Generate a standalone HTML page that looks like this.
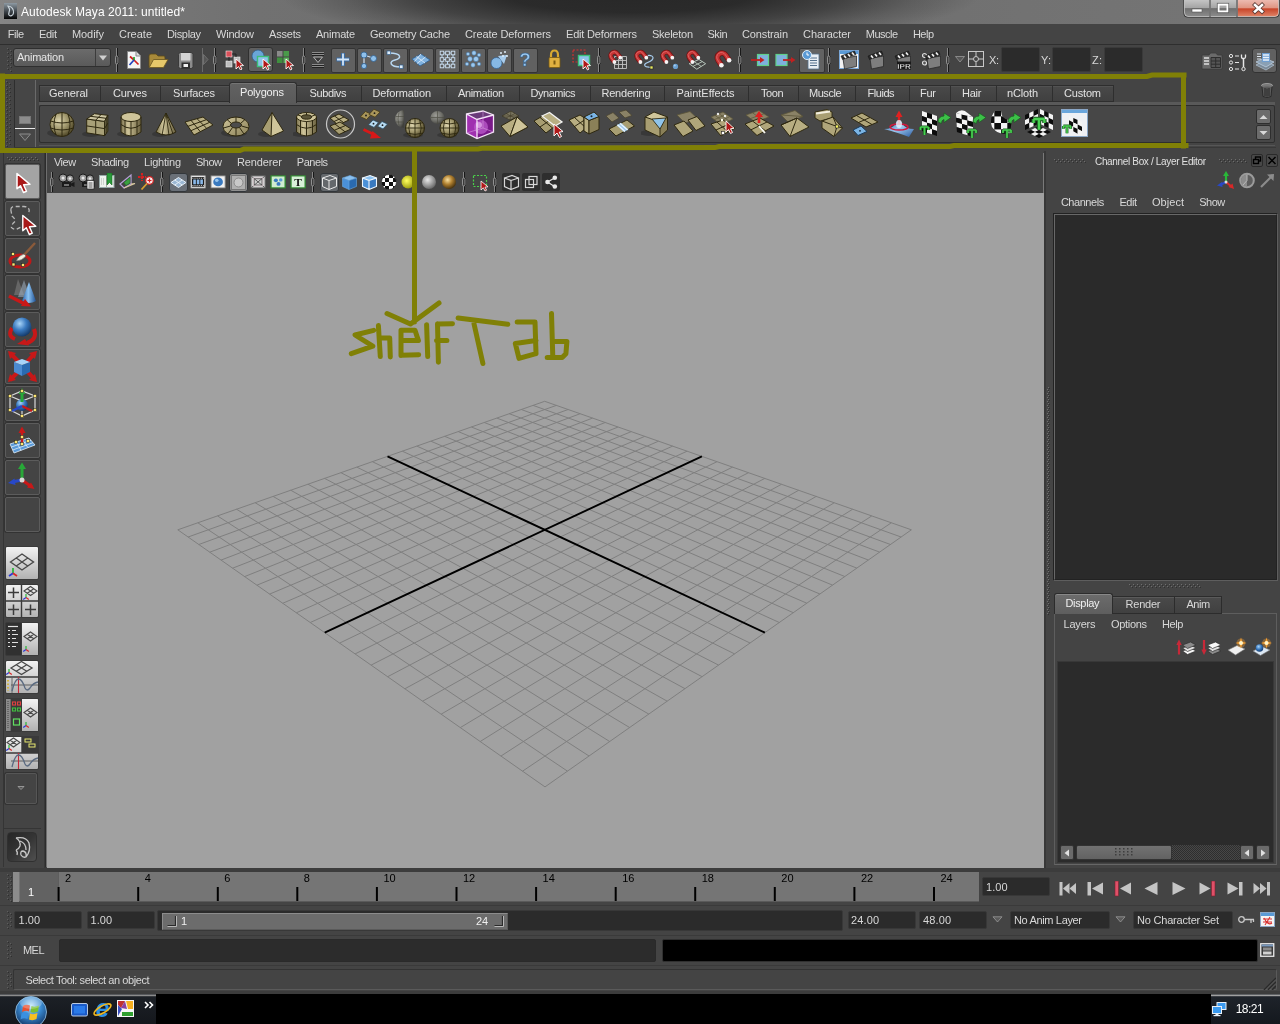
<!DOCTYPE html>
<html><head><meta charset="utf-8"><title>Autodesk Maya 2011: untitled*</title>
<style>
html,body{margin:0;padding:0;}
body{width:1280px;height:1024px;position:relative;overflow:hidden;background:#444444;font-family:"Liberation Sans",sans-serif;}
#root{position:absolute;left:0;top:0;width:1280px;height:1024px;overflow:hidden;background:transparent;will-change:transform;}
#root div,#root span,#root svg{position:absolute;box-sizing:border-box;}
.t{white-space:nowrap;}
</style></head><body><div id="root">
<div style="left:0px;top:0px;width:1280px;height:24px;background:linear-gradient(90deg,#858585 0%,#787878 8%,#717171 20%,#6c6c6c 50%,#727272 80%,#757575 100%);"></div>
<div style="left:0px;top:0px;width:1280px;height:24px;background:radial-gradient(ellipse 350px 50px at 630px -5px,rgba(40,40,40,1) 0%,rgba(40,40,40,.96) 35%,rgba(40,40,40,.62) 62%,rgba(40,40,40,.25) 82%,rgba(40,40,40,0) 100%);"></div>
<span class="t" style="left:21.0px;top:4.0px;font-size:12px;line-height:16px;color:#ffffff;letter-spacing:0.076px;">Autodesk Maya 2011: untitled*</span>
<svg style="left:4px;top:3px;" width="13" height="16" viewBox="0 0 13 16"><defs><linearGradient id="mi" x1="0" y1="0" x2="0" y2="1"><stop offset="0" stop-color="#8e9aa3"/><stop offset=".55" stop-color="#3c4248"/><stop offset="1" stop-color="#050505"/></linearGradient></defs><rect width="13" height="16" fill="url(#mi)"/><path d="M4 3C8 3 10 7 9.5 10C9 13 6 13.5 5 12C4 10 6 8 5.5 6C5 5 4.5 4 4 3Z" fill="none" stroke="#c9d3da" stroke-width="1.2"/></svg>
<svg style="left:1182px;top:0px;" width="98" height="19" viewBox="0 0 98 19"><defs>
<linearGradient id="wb" x1="0" y1="0" x2="0" y2="1"><stop offset="0" stop-color="#c4c4c4"/><stop offset=".48" stop-color="#a4a4a4"/><stop offset=".52" stop-color="#6f6f6f"/><stop offset="1" stop-color="#8c8c8c"/></linearGradient>
<linearGradient id="wc" x1="0" y1="0" x2="0" y2="1"><stop offset="0" stop-color="#ecbab0"/><stop offset=".46" stop-color="#e09684"/><stop offset=".54" stop-color="#c8452a"/><stop offset="1" stop-color="#e08468"/></linearGradient></defs>
<path d="M1.5 0V13Q1.5 17.5 6 17.5H93Q97.5 17.5 97.5 13V0Z" fill="#2a2a2a"/>
<path d="M2.5 0V13Q2.5 16.5 6 16.5H27.5V0Z" fill="url(#wb)"/>
<rect x="28.500" y="0" width="26" height="16.500" fill="url(#wb)"/>
<path d="M55.5 0V16.5H93Q96.500 16.5 96.500 13V0Z" fill="url(#wc)"/>
<path d="M2.5 0V13Q2.5 16.5 6 16.5H93Q96.5 16.5 96.5 13V0M27.500 0V16.5M28.5 0V16.5M54.5 0V16.5M55.5 0V16.5" fill="none" stroke="rgba(255,255,255,.55)" stroke-width="1"/>
<path d="M28 0V17M55 0V17" stroke="#3a3a3a" stroke-width="1"/>
<rect x="10" y="9" width="10" height="3" fill="#fff" stroke="#555" stroke-width=".6"/>
<rect x="36.500" y="4.500" width="9" height="7" fill="none" stroke="#fff" stroke-width="2"/><rect x="35.200" y="3.200" width="11.600" height="9.600" fill="none" stroke="#555" stroke-width=".6"/>
<path d="M73 5L80 11.500M80 5L73 11.500" stroke="#5a3a34" stroke-width="4.200" stroke-linecap="square"/><path d="M73 5L80 11.500M80 5L73 11.500" stroke="#fff" stroke-width="2.600" stroke-linecap="square"/>
</svg>
<div style="left:0px;top:24px;width:1280px;height:21px;background:#444444;"></div>
<span class="t" style="left:7.8px;top:27.0px;font-size:11px;line-height:15px;color:#d8d8d8;letter-spacing:-0.462px;">File</span>
<span class="t" style="left:39.0px;top:27.0px;font-size:11px;line-height:15px;color:#d8d8d8;letter-spacing:-0.318px;">Edit</span>
<span class="t" style="left:72.0px;top:27.0px;font-size:11px;line-height:15px;color:#d8d8d8;letter-spacing:-0.080px;">Modify</span>
<span class="t" style="left:119.0px;top:27.0px;font-size:11px;line-height:15px;color:#d8d8d8;letter-spacing:-0.003px;">Create</span>
<span class="t" style="left:167.0px;top:27.0px;font-size:11px;line-height:15px;color:#d8d8d8;letter-spacing:-0.344px;">Display</span>
<span class="t" style="left:216.0px;top:27.0px;font-size:11px;line-height:15px;color:#d8d8d8;letter-spacing:-0.224px;">Window</span>
<span class="t" style="left:269.0px;top:27.0px;font-size:11px;line-height:15px;color:#d8d8d8;letter-spacing:-0.202px;">Assets</span>
<span class="t" style="left:316.0px;top:27.0px;font-size:11px;line-height:15px;color:#d8d8d8;letter-spacing:-0.226px;">Animate</span>
<span class="t" style="left:370.0px;top:27.0px;font-size:11px;line-height:15px;color:#d8d8d8;letter-spacing:-0.242px;">Geometry Cache</span>
<span class="t" style="left:465.0px;top:27.0px;font-size:11px;line-height:15px;color:#d8d8d8;letter-spacing:-0.094px;">Create Deformers</span>
<span class="t" style="left:566.0px;top:27.0px;font-size:11px;line-height:15px;color:#d8d8d8;letter-spacing:-0.181px;">Edit Deformers</span>
<span class="t" style="left:652.0px;top:27.0px;font-size:11px;line-height:15px;color:#d8d8d8;letter-spacing:-0.258px;">Skeleton</span>
<span class="t" style="left:707.5px;top:27.0px;font-size:11px;line-height:15px;color:#d8d8d8;letter-spacing:-0.462px;">Skin</span>
<span class="t" style="left:742.0px;top:27.0px;font-size:11px;line-height:15px;color:#d8d8d8;letter-spacing:-0.135px;">Constrain</span>
<span class="t" style="left:803.0px;top:27.0px;font-size:11px;line-height:15px;color:#d8d8d8;letter-spacing:-0.037px;">Character</span>
<span class="t" style="left:865.7px;top:27.0px;font-size:11px;line-height:15px;color:#d8d8d8;letter-spacing:-0.462px;">Muscle</span>
<span class="t" style="left:912.9px;top:27.0px;font-size:11px;line-height:15px;color:#d8d8d8;letter-spacing:-0.462px;">Help</span>
<div style="left:0px;top:44px;width:1280px;height:1px;background:#2e2e2e;"></div>
<div style="left:0px;top:45px;width:1280px;height:29px;background:#444444;"></div>
<div style="left:0px;top:74px;width:1280px;height:77px;background:#444444;"></div>
<div style="left:46px;top:151px;width:998px;height:717px;background:#444444;"></div>
<div style="left:47px;top:193px;width:997px;height:675px;background:#a1a1a1;"></div>
<div style="left:0px;top:151px;width:46px;height:717px;background:#444444;"></div>
<div style="left:44px;top:151px;width:2px;height:717px;background:#383838;"></div>
<div style="left:1044px;top:151px;width:236px;height:717px;background:#444444;"></div>
<div style="left:0px;top:868px;width:1280px;height:37px;background:#444444;"></div>
<div style="left:0px;top:905px;width:1280px;height:30px;background:#444444;"></div>
<div style="left:0px;top:935px;width:1280px;height:30px;background:#444444;"></div>
<div style="left:0px;top:965px;width:1280px;height:29px;background:#444444;"></div>
<div style="left:0px;top:994px;width:1280px;height:30px;background:#000000;"></div>
<svg style="left:0px;top:0px;z-index:50;pointer-events:none" width="1280" height="1024" viewBox="0 0 1280 1024"><path d="M544.7 401.3L177.8 529.8M544.7 401.3L911.4 529.8M556.3 405.4L188.1 537.0M533.1 405.4L901.1 537.0M568.1 409.5L198.8 544.5M521.3 409.5L890.5 544.5M580.2 413.7L209.7 552.2M509.2 413.7L879.6 552.1M592.5 418.1L221.0 560.1M496.9 418.1L868.3 560.0M605.2 422.5L232.6 568.2M484.3 422.5L856.8 568.1M618.1 427.0L244.6 576.6M471.4 427.0L844.8 576.5M631.3 431.6L256.9 585.2M458.2 431.6L832.5 585.1M644.7 436.4L269.6 594.1M444.7 436.3L819.9 594.0M658.5 441.2L282.7 603.3M430.9 441.2L806.8 603.2M672.7 446.1L296.3 612.8M416.8 446.1L793.3 612.7M687.1 451.2L310.3 622.5M402.3 451.2L779.3 622.5M717.0 461.7L339.6 643.1M372.4 461.7L750.0 643.0M732.6 467.1L355.1 653.9M356.8 467.1L734.6 653.9M748.5 472.7L371.1 665.1M340.9 472.7L718.6 665.1M764.8 478.4L387.7 676.7M324.6 478.4L702.1 676.7M781.5 484.3L404.8 688.8M307.9 484.2L685.0 688.7M798.6 490.3L422.6 701.2M290.7 490.2L667.2 701.2M816.2 496.4L441.1 714.2M273.1 496.4L648.8 714.1M834.2 502.8L460.3 727.6M255.1 502.7L629.6 727.5M852.7 509.2L480.2 741.5M236.5 509.2L609.7 741.5M871.8 515.9L500.9 756.1M217.5 515.9L589.0 756.0M891.3 522.8L522.5 771.2M197.9 522.8L567.4 771.1M911.4 529.8L545.0 786.9M177.8 529.8L545.0 786.9" stroke="#7f7f7f" stroke-width="1" fill="none"/><path d="M701.9 456.4L324.7 632.7M387.5 456.4L764.9 632.6" stroke="#000" stroke-width="1.9" fill="none"/><path d="M2 76.5L1147 76.5L1152 75L1184 75M1183.5 75L1183.5 146M2.5 76L2.5 150M2 150.5L240 150.5L244 149L478 149L482 148.2L715 147.6L719 146.6L950 146.4L954 145.6L1186 145.6" stroke="#808006" stroke-width="5" fill="none" stroke-linecap="square" stroke-linejoin="miter"/><path d="M414.5 150L414.5 322M387 313.5L410.5 324L439 303M373.7 330.3L355 335L372.8 346.2L351.3 353.7M378.4 325.6L380.3 356.6M380.3 338L389.7 338L390.3 357M401 355.5L401 330.3L415 330.3L418.4 340.6L401 340.6M401 355.2L418.7 354.7M426.6 324.7L427.7 356.6M437.5 323.8L438.4 362.2M437.5 324.1L452.5 323.8M436.6 340.6L446.9 340.6M458.1 318.1L507.8 324.3M474 323.8L482.9 363.5M517.2 321.9L535 321.9L536 353.7M536 340.6L515.3 343.4L519 358.4L536 353.7M551.5 313.4L552.8 357.5M552.8 341.6L566.9 341.6L565.9 353.7L562.2 357.5L547.2 357.5" stroke="#808006" stroke-width="5" fill="none" stroke-linecap="round" stroke-linejoin="round"/></svg>
<svg style="left:7px;top:48px;" width="6" height="24" viewBox="0 0 6 24"><rect x="0" y="0" width="1" height="1" fill="#5e5e5e"/><rect x="1" y="1" width="1" height="1" fill="#2e2e2e"/><rect x="3" y="2" width="1" height="1" fill="#5e5e5e"/><rect x="4" y="3" width="1" height="1" fill="#2e2e2e"/><rect x="0" y="4" width="1" height="1" fill="#5e5e5e"/><rect x="1" y="5" width="1" height="1" fill="#2e2e2e"/><rect x="3" y="6" width="1" height="1" fill="#5e5e5e"/><rect x="4" y="7" width="1" height="1" fill="#2e2e2e"/><rect x="0" y="8" width="1" height="1" fill="#5e5e5e"/><rect x="1" y="9" width="1" height="1" fill="#2e2e2e"/><rect x="3" y="10" width="1" height="1" fill="#5e5e5e"/><rect x="4" y="11" width="1" height="1" fill="#2e2e2e"/><rect x="0" y="12" width="1" height="1" fill="#5e5e5e"/><rect x="1" y="13" width="1" height="1" fill="#2e2e2e"/><rect x="3" y="14" width="1" height="1" fill="#5e5e5e"/><rect x="4" y="15" width="1" height="1" fill="#2e2e2e"/><rect x="0" y="16" width="1" height="1" fill="#5e5e5e"/><rect x="1" y="17" width="1" height="1" fill="#2e2e2e"/><rect x="3" y="18" width="1" height="1" fill="#5e5e5e"/><rect x="4" y="19" width="1" height="1" fill="#2e2e2e"/><rect x="0" y="20" width="1" height="1" fill="#5e5e5e"/><rect x="1" y="21" width="1" height="1" fill="#2e2e2e"/><rect x="3" y="22" width="1" height="1" fill="#5e5e5e"/><rect x="4" y="23" width="1" height="1" fill="#2e2e2e"/></svg>
<div style="left:13px;top:48px;width:98px;height:19px;background:linear-gradient(180deg,#6b6b6b,#5a5a5a);border:1px solid #2f2f2f;border-radius:3px;"></div>
<div style="left:95px;top:49px;width:1px;height:17px;background:#3c3c3c;"></div>
<svg style="left:98px;top:55px;" width="10" height="6" viewBox="0 0 10 6"><path d="M1 .5H9L5 5.500Z" fill="#d0d0d0"/></svg>
<span class="t" style="left:17.0px;top:50.0px;font-size:11px;line-height:15px;color:#e6e6e6;letter-spacing:-0.239px;">Animation</span>
<svg style="left:114px;top:48px;" width="6" height="24" viewBox="0 0 6 24"><path d="M2.500 0V24" stroke="#868686" stroke-width="1"/><path d="M3.500 0V24" stroke="#181818" stroke-width="1"/><rect x="4" y="8.0" width="1" height="8" fill="#181818"/><rect x="1.500" y="8.0" width="2.500" height="8" rx="1.200" fill="#3a3a3a" stroke="#9a9a9a" stroke-width=".9"/></svg>
<svg style="left:126px;top:51px;" width="16" height="18" viewBox="0 0 16 18"><path d="M1.500 .5H10L14.500 5V17.500H1.500Z" fill="#f4f4f4" stroke="#8a8a8a"/><path d="M10 .5V5H14.500" fill="#ddd" stroke="#8a8a8a"/><path d="M8 9L4 5.500M8 9L12.500 13.500" stroke="#d02020" stroke-width="1.700" fill="none"/><path d="M8 9L3.500 14" stroke="#2040c0" stroke-width="1.700" fill="none"/><path d="M8 9V6" stroke="#20a030" stroke-width="1.700"/></svg>
<svg style="left:148px;top:52px;" width="21" height="17" viewBox="0 0 21 17"><path d="M1 4Q1 2 3 2H8L10 4H16Q17 4 17 6V8H6L2 15H1Z" fill="#a88a3a" stroke="#5c4a1a" stroke-width=".8"/><path d="M5.500 7.500H20L15.500 15.500H1.200Z" fill="#e6c86a" stroke="#6a5520" stroke-width=".8"/></svg>
<svg style="left:178px;top:52px;" width="16" height="17" viewBox="0 0 16 17"><rect x=".5" y=".5" width="14.500" height="16" rx="2" fill="#8c8c8c" stroke="#3a3a3a"/><rect x="3" y="1" width="9.500" height="7.500" fill="#d4d4d4"/><rect x="3.500" y="10.500" width="8.500" height="6" fill="#2e2e2e"/><rect x="5.500" y="12" width="4.500" height="3" fill="#f0f0f0"/></svg>
<div style="left:201.5px;top:48px;width:1px;height:24px;background:#6a6a6a;"></div>
<svg style="left:203px;top:54px;" width="6" height="11" viewBox="0 0 6 11"><path d="M.5 .5L5 5.500L.5 10.500Z" fill="#555" stroke="#7a7a7a" stroke-width=".8"/></svg>
<svg style="left:212px;top:48px;" width="6" height="24" viewBox="0 0 6 24"><path d="M2.500 0V24" stroke="#868686" stroke-width="1"/><path d="M3.500 0V24" stroke="#181818" stroke-width="1"/><rect x="4" y="8.0" width="1" height="8" fill="#181818"/><rect x="1.500" y="8.0" width="2.500" height="8" rx="1.200" fill="#3a3a3a" stroke="#9a9a9a" stroke-width=".9"/></svg>
<svg style="left:224px;top:50px;" width="21" height="20" viewBox="0 0 21 20"><rect x="2" y="1" width="6" height="6" fill="#d9505a" stroke="#eee" stroke-width=".6"/><rect x="2" y="11" width="6" height="6" fill="#bdbdbd" stroke="#eee" stroke-width=".6"/><rect x="10" y="7" width="6" height="6" fill="#bdbdbd" stroke="#eee" stroke-width=".6"/><path d="M5 7V11M8 4H12V7" stroke="#222" stroke-width="1" fill="none"/><path d="M12 9L12 19L14.500 16.500L16.500 20L18 19L16.200 15.800L19.500 15.500Z" fill="#b01818" stroke="#fff" stroke-width=".9"/></svg>
<div style="left:248px;top:47px;width:25px;height:25px;background:#606060;border:1px solid #303030;border-radius:3px;"></div>
<svg style="left:251px;top:49px;" width="20" height="22" viewBox="0 0 20 22"><circle cx="7" cy="7" r="6" fill="#6aa6d8" stroke="#2a5a8a" stroke-width=".7"/><rect x="6.500" y="7.500" width="11" height="10" fill="#8fc4ea" stroke="#3cc07a" stroke-width="1.400"/><path d="M12 10L12 20L14.500 17.500L16.500 21L18 20L16.200 16.800L19.500 16.500Z" fill="#b01818" stroke="#fff" stroke-width=".9"/></svg>
<svg style="left:277px;top:51px;" width="20" height="21" viewBox="0 0 20 21"><rect x="0" y="0" width="5.500" height="5.500" fill="#8a8a8a"/><rect x="6.500" y="0" width="5.500" height="5.500" fill="#4a9a4a"/><rect x="0" y="6.500" width="5.500" height="5.500" fill="#3f8f3f"/><rect x="6.500" y="6.500" width="5.500" height="5.500" fill="#58b058"/><path d="M9 8L9 18L11.500 15.500L13.500 19L15 18L13.200 14.800L16.500 14.500Z" fill="#b01818" stroke="#fff" stroke-width=".9"/></svg>
<svg style="left:301px;top:48px;" width="6" height="24" viewBox="0 0 6 24"><path d="M2.500 0V24" stroke="#868686" stroke-width="1"/><path d="M3.500 0V24" stroke="#181818" stroke-width="1"/><rect x="4" y="8.0" width="1" height="8" fill="#181818"/><rect x="1.500" y="8.0" width="2.500" height="8" rx="1.200" fill="#3a3a3a" stroke="#9a9a9a" stroke-width=".9"/></svg>
<svg style="left:312px;top:51px;" width="12" height="17" viewBox="0 0 12 17"><path d="M0 1.500H12M0 3.500H12M0 13.500H12M0 15.500H12" stroke="#8c8c8c" stroke-width="1"/><path d="M0 2.500H12M0 4.500H12M0 14.500H12M0 16.500H12" stroke="#222" stroke-width="1"/><path d="M1.500 6H10.500L6 11.500Z" fill="#383838" stroke="#b4b4b4" stroke-width="1"/></svg>
<div style="left:330.5px;top:47.5px;width:25px;height:25px;background:#616161;border:1px solid #343434;border-radius:2px;"></div>
<div style="left:356.5px;top:47.5px;width:25px;height:25px;background:#616161;border:1px solid #343434;border-radius:2px;"></div>
<div style="left:382.5px;top:47.5px;width:25px;height:25px;background:#616161;border:1px solid #343434;border-radius:2px;"></div>
<div style="left:408.5px;top:47.5px;width:25px;height:25px;background:#616161;border:1px solid #343434;border-radius:2px;"></div>
<div style="left:434.5px;top:47.5px;width:25px;height:25px;background:#616161;border:1px solid #343434;border-radius:2px;"></div>
<div style="left:460.5px;top:47.5px;width:25px;height:25px;background:#616161;border:1px solid #343434;border-radius:2px;"></div>
<div style="left:486.5px;top:47.5px;width:25px;height:25px;background:#616161;border:1px solid #343434;border-radius:2px;"></div>
<div style="left:512.5px;top:47.5px;width:25px;height:25px;background:#616161;border:1px solid #343434;border-radius:2px;"></div>
<svg style="left:331px;top:47px;" width="24" height="25" viewBox="0 0 24 25"><path d="M12 6V19M5.500 12.500H18.500" stroke="#3a6ea8" stroke-width="3.800" stroke-linecap="butt"/><path d="M12 6.500V18.500M6 12.500H18" stroke="#d4e6f8" stroke-width="1.800" stroke-linecap="butt"/></svg>
<svg style="left:357px;top:47px;" width="24" height="25" viewBox="0 0 24 25"><path d="M7 8L16 11M7 8V19" stroke="#cfe2f4" stroke-width="1.200"/><circle cx="7" cy="8" r="3" fill="#8fc0ea" stroke="#2f5f90" stroke-width=".8"/><circle cx="16.500" cy="11.500" r="3" fill="#8fc0ea" stroke="#2f5f90" stroke-width=".8"/><circle cx="7" cy="19" r="2.600" fill="#8fc0ea" stroke="#2f5f90" stroke-width=".8"/></svg>
<svg style="left:383px;top:47px;" width="24" height="25" viewBox="0 0 24 25"><path d="M6 6C20 6 18 12 12 13C6 14 6 20 18 20" stroke="#b9d8f2" stroke-width="1.500" fill="none"/><rect x="4" y="4" width="3.500" height="3.500" fill="#dfeefa" stroke="#2f5f90" stroke-width=".7"/><rect x="16.500" y="18" width="3.500" height="3.500" fill="#dfeefa" stroke="#2f5f90" stroke-width=".7"/></svg>
<svg style="left:409px;top:47px;" width="24" height="25" viewBox="0 0 24 25"><path d="M3 12L12 7L21 13L11 19Z" fill="#7fb2e0" stroke="#2f5f90" stroke-width=".8"/><path d="M7.500 9.500L16 16M12 7L5.500 14.500M16.500 10L8 16.500" stroke="#d8e9f8" stroke-width=".9"/></svg>
<svg style="left:435px;top:47px;" width="24" height="25" viewBox="0 0 24 25"><path d="M7 6H18V19H7ZM12.500 6V19M7 12.500H18" stroke="#b9d8f2" stroke-width="1" fill="none"/><rect x="5.2" y="4.2" width="3.600" height="3.600" fill="#5d5d5d" stroke="#cfe2f4" stroke-width=".9"/><rect x="5.2" y="10.7" width="3.600" height="3.600" fill="#5d5d5d" stroke="#cfe2f4" stroke-width=".9"/><rect x="5.2" y="17.2" width="3.600" height="3.600" fill="#5d5d5d" stroke="#cfe2f4" stroke-width=".9"/><rect x="10.7" y="4.2" width="3.600" height="3.600" fill="#5d5d5d" stroke="#cfe2f4" stroke-width=".9"/><rect x="10.7" y="10.7" width="3.600" height="3.600" fill="#5d5d5d" stroke="#cfe2f4" stroke-width=".9"/><rect x="10.7" y="17.2" width="3.600" height="3.600" fill="#5d5d5d" stroke="#cfe2f4" stroke-width=".9"/><rect x="16.2" y="4.2" width="3.600" height="3.600" fill="#5d5d5d" stroke="#cfe2f4" stroke-width=".9"/><rect x="16.2" y="10.7" width="3.600" height="3.600" fill="#5d5d5d" stroke="#cfe2f4" stroke-width=".9"/><rect x="16.2" y="17.2" width="3.600" height="3.600" fill="#5d5d5d" stroke="#cfe2f4" stroke-width=".9"/></svg>
<svg style="left:461px;top:47px;" width="24" height="25" viewBox="0 0 24 25"><circle cx="7" cy="7" r="1.8" fill="#9cc8ee" stroke="#3f70a0" stroke-width=".5"/><circle cx="13" cy="6" r="2.2" fill="#9cc8ee" stroke="#3f70a0" stroke-width=".5"/><circle cx="18" cy="8" r="1.8" fill="#9cc8ee" stroke="#3f70a0" stroke-width=".5"/><circle cx="9" cy="12" r="2.4" fill="#9cc8ee" stroke="#3f70a0" stroke-width=".5"/><circle cx="15" cy="12" r="2.6" fill="#9cc8ee" stroke="#3f70a0" stroke-width=".5"/><circle cx="6" cy="17" r="1.8" fill="#9cc8ee" stroke="#3f70a0" stroke-width=".5"/><circle cx="12" cy="18" r="2.2" fill="#9cc8ee" stroke="#3f70a0" stroke-width=".5"/><circle cx="18" cy="17" r="1.8" fill="#9cc8ee" stroke="#3f70a0" stroke-width=".5"/></svg>
<svg style="left:487px;top:47px;" width="24" height="25" viewBox="0 0 24 25"><circle cx="9.500" cy="16" r="5.500" fill="#86b8e4" stroke="#2f5f90" stroke-width=".7"/><path d="M11 9L17 17L20 8Z" fill="#a8cdee"/><circle cx="14" cy="6" r="1" fill="#dfeefa"/><circle cx="18" cy="5" r="1" fill="#dfeefa"/><circle cx="20" cy="9" r="1" fill="#dfeefa"/><circle cx="16" cy="9" r="1" fill="#dfeefa"/></svg>
<svg style="left:513px;top:47px;" width="24" height="25" viewBox="0 0 24 25"><text x="12" y="19" font-family="Liberation Sans" font-weight="bold" font-size="19" text-anchor="middle" fill="#9cc8ee" stroke="#2f5f90" stroke-width=".6">?</text></svg>
<svg style="left:548px;top:49px;" width="13" height="20" viewBox="0 0 13 20"><path d="M3 9V6Q3 1.500 6.500 1.500Q10 1.500 10 6V9" fill="none" stroke="#d8a830" stroke-width="2.200"/><rect x="1" y="8.500" width="11" height="10" rx="1" fill="#e0b040" stroke="#7a5a10" stroke-width=".8"/><rect x="5.500" y="11.500" width="2" height="4" fill="#7a5a10"/></svg>
<svg style="left:572px;top:49px;" width="20" height="22" viewBox="0 0 20 22"><rect x="1" y="1" width="12" height="12" fill="none" stroke="#d03030" stroke-width="1.200" stroke-dasharray="2 1.500"/><rect x="6.500" y="6.500" width="11" height="10" fill="#8fc4ea" stroke="#3cc07a" stroke-width="1.400"/><path d="M11 10L11 20L13.500 17.500L15.500 21L17 20L15.200 16.800L18.500 16.500Z" fill="#b01818" stroke="#fff" stroke-width=".9"/></svg>
<svg style="left:596px;top:48px;" width="6" height="24" viewBox="0 0 6 24"><path d="M2.500 0V24" stroke="#868686" stroke-width="1"/><path d="M3.500 0V24" stroke="#181818" stroke-width="1"/><rect x="4" y="8.0" width="1" height="8" fill="#181818"/><rect x="1.500" y="8.0" width="2.500" height="8" rx="1.200" fill="#3a3a3a" stroke="#9a9a9a" stroke-width=".9"/></svg>
<svg style="left:606px;top:49px;" width="24" height="23" viewBox="0 0 24 23"><path d="M8.500 7.500H20.500V19.500H8.500ZM12.500 7.500V19.500M16.500 7.500V19.500M8.500 11.500H20.500M8.500 15.500H20.500" stroke="#c4c4c4" stroke-width=".9" fill="none"/><path d="M8.400 13L5.400 8.950A3.650 3.650 0 0 1 11.300 4.650L14.300 8.700" fill="none" stroke="#701414" stroke-width="4.8"/><path d="M8.400 13L5.400 8.950A3.650 3.650 0 0 1 11.300 4.650L14.300 8.700" fill="none" stroke="#c83434" stroke-width="3.2"/><path d="M8.400 13L5.400 8.950A3.650 3.650 0 0 1 11.300 4.650L14.300 8.700" fill="none" stroke="#e88080" stroke-width="1" transform="translate(-.6,-.6)" opacity=".6"/><circle cx="8.4" cy="13" r="1.9000000000000001" fill="#f4f4f4"/><circle cx="14.3" cy="8.7" r="1.9000000000000001" fill="#f4f4f4"/></svg>
<svg style="left:632px;top:49px;" width="24" height="23" viewBox="0 0 24 23"><path d="M14 7C19 5 23 8 20 11C17 14 11 14 13 17C14 18.500 17 18 19 18.500" stroke="#a8cdee" stroke-width="1.200" fill="none"/><rect x="18" y="17" width="3" height="3" fill="#e8e860" stroke="#222" stroke-width=".6"/><path d="M8.400 13L5.400 8.950A3.650 3.650 0 0 1 11.300 4.650L14.300 8.700" fill="none" stroke="#701414" stroke-width="4.8"/><path d="M8.400 13L5.400 8.950A3.650 3.650 0 0 1 11.300 4.650L14.300 8.700" fill="none" stroke="#c83434" stroke-width="3.2"/><path d="M8.400 13L5.400 8.950A3.650 3.650 0 0 1 11.300 4.650L14.300 8.700" fill="none" stroke="#e88080" stroke-width="1" transform="translate(-.6,-.6)" opacity=".6"/><circle cx="8.4" cy="13" r="1.9000000000000001" fill="#f4f4f4"/><circle cx="14.3" cy="8.7" r="1.9000000000000001" fill="#f4f4f4"/></svg>
<svg style="left:658px;top:49px;" width="24" height="23" viewBox="0 0 24 23"><circle cx="17.500" cy="17.400" r="2.600" fill="#6a9fd0"/><circle cx="16.800" cy="16.600" r="1" fill="#a8cdee"/><path d="M8.400 13L5.400 8.950A3.650 3.650 0 0 1 11.300 4.650L14.300 8.700" fill="none" stroke="#701414" stroke-width="4.8"/><path d="M8.400 13L5.400 8.950A3.650 3.650 0 0 1 11.300 4.650L14.300 8.700" fill="none" stroke="#c83434" stroke-width="3.2"/><path d="M8.400 13L5.400 8.950A3.650 3.650 0 0 1 11.300 4.650L14.300 8.700" fill="none" stroke="#e88080" stroke-width="1" transform="translate(-.6,-.6)" opacity=".6"/><circle cx="8.4" cy="13" r="1.9000000000000001" fill="#f4f4f4"/><circle cx="14.3" cy="8.7" r="1.9000000000000001" fill="#f4f4f4"/></svg>
<svg style="left:684px;top:49px;" width="24" height="23" viewBox="0 0 24 23"><path d="M5.200 14.700L15 10.500L21.600 14.700L12.800 20.200Z" fill="none" stroke="#c4d4c8" stroke-width=".9"/><path d="M10 12.600L17.200 17.400M18.300 12.600L9 17.400" stroke="#c4d4c8" stroke-width=".8"/><path d="M8.400 13L5.400 8.950A3.650 3.650 0 0 1 11.300 4.650L14.300 8.700" fill="none" stroke="#701414" stroke-width="4.8"/><path d="M8.400 13L5.400 8.950A3.650 3.650 0 0 1 11.300 4.650L14.300 8.700" fill="none" stroke="#c83434" stroke-width="3.2"/><path d="M8.400 13L5.400 8.950A3.650 3.650 0 0 1 11.300 4.650L14.300 8.700" fill="none" stroke="#e88080" stroke-width="1" transform="translate(-.6,-.6)" opacity=".6"/><circle cx="8.4" cy="13" r="1.9000000000000001" fill="#f4f4f4"/><circle cx="14.3" cy="8.7" r="1.9000000000000001" fill="#f4f4f4"/></svg>
<svg style="left:710px;top:49px;" width="24" height="23" viewBox="0 0 24 23"><path d="M11.400 16.300L8.100 11.300A4.600 4.600 0 0 1 15.800 6.200L19.100 11.200" fill="none" stroke="#701414" stroke-width="5.6"/><path d="M11.400 16.300L8.100 11.300A4.600 4.600 0 0 1 15.800 6.200L19.100 11.200" fill="none" stroke="#c83434" stroke-width="4"/><path d="M11.400 16.300L8.100 11.300A4.600 4.600 0 0 1 15.800 6.200L19.100 11.200" fill="none" stroke="#e88080" stroke-width="1" transform="translate(-.6,-.6)" opacity=".6"/><circle cx="11.4" cy="16.3" r="2.3" fill="#f4f4f4"/><circle cx="19.1" cy="11.2" r="2.3" fill="#f4f4f4"/></svg>
<svg style="left:737px;top:48px;" width="6" height="24" viewBox="0 0 6 24"><path d="M2.500 0V24" stroke="#868686" stroke-width="1"/><path d="M3.500 0V24" stroke="#181818" stroke-width="1"/><rect x="4" y="8.0" width="1" height="8" fill="#181818"/><rect x="1.500" y="8.0" width="2.500" height="8" rx="1.200" fill="#3a3a3a" stroke="#9a9a9a" stroke-width=".9"/></svg>
<svg style="left:750px;top:51px;" width="22" height="18" viewBox="0 0 22 18"><rect x="7.500" y="3.500" width="11" height="11" fill="#7fb0dd" stroke="#5fd08a" stroke-width="1.200"/><path d="M1 9H11" stroke="#c02020" stroke-width="1.800"/><path d="M10 6L14.500 9L10 12Z" fill="#c02020"/></svg>
<svg style="left:774px;top:51px;" width="24" height="18" viewBox="0 0 24 18"><rect x="2" y="3.500" width="11" height="11" fill="#7fb0dd" stroke="#5fd08a" stroke-width="1.200"/><path d="M9 9H18" stroke="#c02020" stroke-width="1.800"/><path d="M17 6L21.500 9L17 12Z" fill="#c02020"/></svg>
<div style="left:798.5px;top:47.5px;width:26px;height:25px;background:#626262;border:1px solid #343434;border-radius:2px;"></div>
<svg style="left:799px;top:47px;" width="25" height="25" viewBox="0 0 25 25"><path d="M9 7H20V22H9Z" fill="#e8eef4" stroke="#54708c" stroke-width=".8"/><path d="M11 11H18M11 13.500H18M11 16H18M11 18.500H18" stroke="#54708c" stroke-width="1"/><circle cx="8" cy="8" r="4.500" fill="#5a9ad6" stroke="#dfeefa" stroke-width="1"/><path d="M8 5.500V8H10" stroke="#fff" stroke-width="1" fill="none"/></svg>
<svg style="left:826px;top:48px;" width="6" height="24" viewBox="0 0 6 24"><path d="M2.500 0V24" stroke="#868686" stroke-width="1"/><path d="M3.500 0V24" stroke="#181818" stroke-width="1"/><rect x="4" y="8.0" width="1" height="8" fill="#181818"/><rect x="1.500" y="8.0" width="2.500" height="8" rx="1.200" fill="#3a3a3a" stroke="#9a9a9a" stroke-width=".9"/></svg>
<svg style="left:839px;top:50px;" width="20" height="19" viewBox="0 0 20 19"><rect x=".5" y=".5" width="19" height="18" fill="#f2f2f2" stroke="#7aa6d6"/><rect x="1" y="1" width="18" height="3" fill="#5a9ad6"/></svg>
<svg style="left:838px;top:49px;" width="22" height="22" viewBox="0 0 22 22"><path d="M5 9.500L18.500 7V17.500L6.500 20Z" fill="#7e7e7e" stroke="#2a2a2a" stroke-width=".8"/><path d="M3 7L16.500 2L18 5.500L4.500 10.500Z" fill="#2a2a2a" stroke="#111" stroke-width=".5"/><path d="M6 6.500L8 9M10 5L12 7.500M14 3.500L16 6" stroke="#f0f0f0" stroke-width="1.700"/></svg>
<svg style="left:865px;top:49px;" width="22" height="22" viewBox="0 0 22 22"><path d="M5 9.500L18.500 7V17.500L6.500 20Z" fill="#7e7e7e" stroke="#2a2a2a" stroke-width=".8"/><path d="M3 7L16.500 2L18 5.500L4.500 10.500Z" fill="#2a2a2a" stroke="#111" stroke-width=".5"/><path d="M6 6.500L8 9M10 5L12 7.500M14 3.500L16 6" stroke="#f0f0f0" stroke-width="1.700"/></svg>
<svg style="left:892px;top:49px;" width="22" height="22" viewBox="0 0 22 22"><path d="M5 9.500L18.500 7V17.500L6.500 20Z" fill="#7e7e7e" stroke="#2a2a2a" stroke-width=".8"/><path d="M3 7L16.500 2L18 5.500L4.500 10.500Z" fill="#2a2a2a" stroke="#111" stroke-width=".5"/><path d="M6 6.500L8 9M10 5L12 7.500M14 3.500L16 6" stroke="#f0f0f0" stroke-width="1.700"/><rect x="5" y="12.500" width="14" height="8" fill="#1a1a1a"/><text x="12" y="19.500" font-family="Liberation Sans" font-weight="bold" font-size="8" text-anchor="middle" fill="#fff" stroke="#111" stroke-width=".3">IPR</text></svg>
<svg style="left:922px;top:49px;" width="22" height="22" viewBox="0 0 22 22"><circle cx="2.500" cy="6.500" r="2" fill="#555" stroke="#ddd" stroke-width="1.200"/><circle cx="2.500" cy="14" r="2" fill="#555" stroke="#ddd" stroke-width="1.200"/><path d="M5 9.500L18.500 7V17.500L6.500 20Z" fill="#7e7e7e" stroke="#2a2a2a" stroke-width=".8"/><path d="M3 7L16.500 2L18 5.500L4.500 10.500Z" fill="#2a2a2a" stroke="#111" stroke-width=".5"/><path d="M6 6.500L8 9M10 5L12 7.500M14 3.500L16 6" stroke="#f0f0f0" stroke-width="1.700"/></svg>
<svg style="left:945px;top:48px;" width="6" height="24" viewBox="0 0 6 24"><path d="M2.500 0V24" stroke="#868686" stroke-width="1"/><path d="M3.500 0V24" stroke="#181818" stroke-width="1"/><rect x="4" y="8.0" width="1" height="8" fill="#181818"/><rect x="1.500" y="8.0" width="2.500" height="8" rx="1.200" fill="#3a3a3a" stroke="#9a9a9a" stroke-width=".9"/></svg>
<svg style="left:955px;top:56px;" width="10" height="8" viewBox="0 0 10 8"><path d="M.5 .5H9.500L5 6Z" fill="#555" stroke="#999" stroke-width=".8"/></svg>
<svg style="left:967.5px;top:50.5px;" width="16" height="16" viewBox="0 0 16 16"><rect x=".5" y=".5" width="15" height="15" fill="none" stroke="#c8c8c8"/><path d="M8 0V16M0 8H16" stroke="#c8c8c8" stroke-width="1"/><circle cx="8" cy="8" r="2.500" fill="#444" stroke="#c8c8c8"/></svg>
<span class="t" style="left:989.0px;top:53.0px;font-size:11px;line-height:15px;color:#d8d8d8;letter-spacing:-0.395px;">X:</span>
<span class="t" style="left:1041.0px;top:53.0px;font-size:11px;line-height:15px;color:#d8d8d8;letter-spacing:0.213px;">Y:</span>
<span class="t" style="left:1092.0px;top:53.0px;font-size:11px;line-height:15px;color:#d8d8d8;letter-spacing:0.225px;">Z:</span>
<div style="left:1001px;top:47px;width:39px;height:25px;background:#2b2b2b;border:1px solid #3a3a3a;border-radius:2px;"></div>
<div style="left:1052px;top:47px;width:39px;height:25px;background:#2b2b2b;border:1px solid #3a3a3a;border-radius:2px;"></div>
<div style="left:1104px;top:47px;width:39px;height:25px;background:#2b2b2b;border:1px solid #3a3a3a;border-radius:2px;"></div>
<svg style="left:1201px;top:52px;" width="22" height="18" viewBox="0 0 22 18"><path d="M1 3H8L9.500 1H15L16.500 3H21V17H1Z" fill="#6a6a6a" stroke="#3a3a3a" stroke-width=".8"/><path d="M3 6H8M3 9H8M3 12H8" stroke="#e0e0e0" stroke-width="1.300"/><path d="M10 5.500H19.500V15.500H10ZM10 9H19.500M10 12.200H19.500M14.700 5.500V15.500" fill="#555" stroke="#2e2e2e" stroke-width="1"/></svg>
<svg style="left:1228px;top:52.5px;" width="22" height="19" viewBox="0 0 22 19"><circle cx="3" cy="3" r="1.600" fill="none" stroke="#e6e6e6"/><circle cx="3" cy="9.500" r="1.600" fill="none" stroke="#e6e6e6"/><circle cx="3" cy="16" r="1.600" fill="none" stroke="#e6e6e6"/><path d="M7 3H11M7 9.500H11M7 16H11" stroke="#e6e6e6" stroke-width="1.200"/><path d="M15.500 5V14" stroke="#e6e6e6" stroke-width="1.500"/><path d="M13.500 1.500V4Q13.500 5.500 15.500 5.500Q17.500 5.500 17.500 4V1.500" fill="none" stroke="#e6e6e6" stroke-width="1.300"/><circle cx="15.500" cy="16" r="1.700" fill="none" stroke="#e6e6e6"/></svg>
<div style="left:1252px;top:48px;width:25px;height:25px;background:#606060;border:1px solid #333;border-radius:3px;"></div>
<svg style="left:1254px;top:51px;" width="22" height="22" viewBox="0 0 22 22"><path d="M2 14L10 10L20 14L12 19Z" fill="#7a8a98" stroke="#b4c6d6" stroke-width=".7"/><path d="M2 11L10 7L20 11L12 16Z" fill="#8aa0b4" stroke="#c4d6e6" stroke-width=".7"/><rect x="8" y="2" width="8" height="9" fill="#6f9ed0"/><path d="M9 4H15M9 6.500H15M9 9H15" stroke="#eaf2fa" stroke-width="1.300"/><path d="M3 3H7M3 5.500H7M3 8H7" stroke="#dfe8f0" stroke-width="1"/></svg>
<svg style="left:6px;top:81px;" width="6" height="66" viewBox="0 0 6 66"><rect x="0" y="0" width="1" height="1" fill="#5e5e5e"/><rect x="1" y="1" width="1" height="1" fill="#2e2e2e"/><rect x="3" y="2" width="1" height="1" fill="#5e5e5e"/><rect x="4" y="3" width="1" height="1" fill="#2e2e2e"/><rect x="0" y="4" width="1" height="1" fill="#5e5e5e"/><rect x="1" y="5" width="1" height="1" fill="#2e2e2e"/><rect x="3" y="6" width="1" height="1" fill="#5e5e5e"/><rect x="4" y="7" width="1" height="1" fill="#2e2e2e"/><rect x="0" y="8" width="1" height="1" fill="#5e5e5e"/><rect x="1" y="9" width="1" height="1" fill="#2e2e2e"/><rect x="3" y="10" width="1" height="1" fill="#5e5e5e"/><rect x="4" y="11" width="1" height="1" fill="#2e2e2e"/><rect x="0" y="12" width="1" height="1" fill="#5e5e5e"/><rect x="1" y="13" width="1" height="1" fill="#2e2e2e"/><rect x="3" y="14" width="1" height="1" fill="#5e5e5e"/><rect x="4" y="15" width="1" height="1" fill="#2e2e2e"/><rect x="0" y="16" width="1" height="1" fill="#5e5e5e"/><rect x="1" y="17" width="1" height="1" fill="#2e2e2e"/><rect x="3" y="18" width="1" height="1" fill="#5e5e5e"/><rect x="4" y="19" width="1" height="1" fill="#2e2e2e"/><rect x="0" y="20" width="1" height="1" fill="#5e5e5e"/><rect x="1" y="21" width="1" height="1" fill="#2e2e2e"/><rect x="3" y="22" width="1" height="1" fill="#5e5e5e"/><rect x="4" y="23" width="1" height="1" fill="#2e2e2e"/><rect x="0" y="24" width="1" height="1" fill="#5e5e5e"/><rect x="1" y="25" width="1" height="1" fill="#2e2e2e"/><rect x="3" y="26" width="1" height="1" fill="#5e5e5e"/><rect x="4" y="27" width="1" height="1" fill="#2e2e2e"/><rect x="0" y="28" width="1" height="1" fill="#5e5e5e"/><rect x="1" y="29" width="1" height="1" fill="#2e2e2e"/><rect x="3" y="30" width="1" height="1" fill="#5e5e5e"/><rect x="4" y="31" width="1" height="1" fill="#2e2e2e"/><rect x="0" y="32" width="1" height="1" fill="#5e5e5e"/><rect x="1" y="33" width="1" height="1" fill="#2e2e2e"/><rect x="3" y="34" width="1" height="1" fill="#5e5e5e"/><rect x="4" y="35" width="1" height="1" fill="#2e2e2e"/><rect x="0" y="36" width="1" height="1" fill="#5e5e5e"/><rect x="1" y="37" width="1" height="1" fill="#2e2e2e"/><rect x="3" y="38" width="1" height="1" fill="#5e5e5e"/><rect x="4" y="39" width="1" height="1" fill="#2e2e2e"/><rect x="0" y="40" width="1" height="1" fill="#5e5e5e"/><rect x="1" y="41" width="1" height="1" fill="#2e2e2e"/><rect x="3" y="42" width="1" height="1" fill="#5e5e5e"/><rect x="4" y="43" width="1" height="1" fill="#2e2e2e"/><rect x="0" y="44" width="1" height="1" fill="#5e5e5e"/><rect x="1" y="45" width="1" height="1" fill="#2e2e2e"/><rect x="3" y="46" width="1" height="1" fill="#5e5e5e"/><rect x="4" y="47" width="1" height="1" fill="#2e2e2e"/><rect x="0" y="48" width="1" height="1" fill="#5e5e5e"/><rect x="1" y="49" width="1" height="1" fill="#2e2e2e"/><rect x="3" y="50" width="1" height="1" fill="#5e5e5e"/><rect x="4" y="51" width="1" height="1" fill="#2e2e2e"/><rect x="0" y="52" width="1" height="1" fill="#5e5e5e"/><rect x="1" y="53" width="1" height="1" fill="#2e2e2e"/><rect x="3" y="54" width="1" height="1" fill="#5e5e5e"/><rect x="4" y="55" width="1" height="1" fill="#2e2e2e"/><rect x="0" y="56" width="1" height="1" fill="#5e5e5e"/><rect x="1" y="57" width="1" height="1" fill="#2e2e2e"/><rect x="3" y="58" width="1" height="1" fill="#5e5e5e"/><rect x="4" y="59" width="1" height="1" fill="#2e2e2e"/><rect x="0" y="60" width="1" height="1" fill="#5e5e5e"/><rect x="1" y="61" width="1" height="1" fill="#2e2e2e"/><rect x="3" y="62" width="1" height="1" fill="#5e5e5e"/><rect x="4" y="63" width="1" height="1" fill="#2e2e2e"/><rect x="0" y="64" width="1" height="1" fill="#5e5e5e"/><rect x="1" y="65" width="1" height="1" fill="#2e2e2e"/><rect x="3" y="66" width="1" height="1" fill="#5e5e5e"/><rect x="4" y="67" width="1" height="1" fill="#2e2e2e"/></svg>
<div style="left:14px;top:80px;width:1px;height:68px;background:#2e2e2e;"></div>
<div style="left:35px;top:80px;width:1px;height:68px;background:#6a6a6a;"></div>
<div style="left:15px;top:80px;width:20px;height:68px;background:#464646;"></div>
<div style="left:19px;top:116px;width:12px;height:8px;background:#8c8c8c;border:1px solid #777;"></div>
<div style="left:15px;top:128px;width:20px;height:1px;background:#e8e8e8;"></div>
<svg style="left:18px;top:133px;" width="14" height="9" viewBox="0 0 14 9"><path d="M1.500 1H12.500L7 7.500Z" fill="#505050" stroke="#8c8c8c" stroke-width="1"/></svg>
<div style="left:39px;top:102px;width:1236px;height:3px;background:#595959;"></div>
<div style="left:39px;top:85px;width:62px;height:17px;background:linear-gradient(180deg,#494949,#404040);border:1px solid #2e2e2e;box-shadow:inset 0 1px 0 #525252;"></div>
<span class="t" style="left:49.0px;top:86.0px;font-size:11px;line-height:15px;color:#e2e2e2;letter-spacing:-0.022px;">General</span>
<div style="left:100px;top:85px;width:61px;height:17px;background:linear-gradient(180deg,#494949,#404040);border:1px solid #2e2e2e;box-shadow:inset 0 1px 0 #525252;"></div>
<span class="t" style="left:113.0px;top:86.0px;font-size:11px;line-height:15px;color:#e2e2e2;letter-spacing:-0.168px;">Curves</span>
<div style="left:160px;top:85px;width:70px;height:17px;background:linear-gradient(180deg,#494949,#404040);border:1px solid #2e2e2e;box-shadow:inset 0 1px 0 #525252;"></div>
<span class="t" style="left:173.0px;top:86.0px;font-size:11px;line-height:15px;color:#e2e2e2;letter-spacing:-0.201px;">Surfaces</span>
<div style="left:228.5px;top:81.5px;width:68px;height:21px;background:linear-gradient(180deg,#626262,#5a5a5a);border:1px solid #2e2e2e;border-bottom:none;border-radius:3px 3px 0 0;box-shadow:inset 0 1px 0 #747474;"></div>
<span class="t" style="left:240.0px;top:85.0px;font-size:11px;line-height:15px;color:#f0f0f0;letter-spacing:-0.179px;">Polygons</span>
<div style="left:296px;top:85px;width:65.5px;height:17px;background:linear-gradient(180deg,#494949,#404040);border:1px solid #2e2e2e;box-shadow:inset 0 1px 0 #525252;"></div>
<span class="t" style="left:309.5px;top:86.0px;font-size:11px;line-height:15px;color:#e2e2e2;letter-spacing:-0.355px;">Subdivs</span>
<div style="left:360.5px;top:85px;width:86.0px;height:17px;background:linear-gradient(180deg,#494949,#404040);border:1px solid #2e2e2e;box-shadow:inset 0 1px 0 #525252;"></div>
<span class="t" style="left:372.5px;top:86.0px;font-size:11px;line-height:15px;color:#e2e2e2;letter-spacing:-0.141px;">Deformation</span>
<div style="left:445.5px;top:85px;width:74.0px;height:17px;background:linear-gradient(180deg,#494949,#404040);border:1px solid #2e2e2e;box-shadow:inset 0 1px 0 #525252;"></div>
<span class="t" style="left:458.0px;top:86.0px;font-size:11px;line-height:15px;color:#e2e2e2;letter-spacing:-0.364px;">Animation</span>
<div style="left:518.5px;top:85px;width:72.5px;height:17px;background:linear-gradient(180deg,#494949,#404040);border:1px solid #2e2e2e;box-shadow:inset 0 1px 0 #525252;"></div>
<span class="t" style="left:530.5px;top:86.0px;font-size:11px;line-height:15px;color:#e2e2e2;letter-spacing:-0.462px;">Dynamics</span>
<div style="left:590px;top:85px;width:75px;height:17px;background:linear-gradient(180deg,#494949,#404040);border:1px solid #2e2e2e;box-shadow:inset 0 1px 0 #525252;"></div>
<span class="t" style="left:601.5px;top:86.0px;font-size:11px;line-height:15px;color:#e2e2e2;letter-spacing:-0.219px;">Rendering</span>
<div style="left:664px;top:85px;width:85px;height:17px;background:linear-gradient(180deg,#494949,#404040);border:1px solid #2e2e2e;box-shadow:inset 0 1px 0 #525252;"></div>
<span class="t" style="left:676.5px;top:86.0px;font-size:11px;line-height:15px;color:#e2e2e2;letter-spacing:-0.045px;">PaintEffects</span>
<div style="left:748px;top:85px;width:50.5px;height:17px;background:linear-gradient(180deg,#494949,#404040);border:1px solid #2e2e2e;box-shadow:inset 0 1px 0 #525252;"></div>
<span class="t" style="left:761.0px;top:86.0px;font-size:11px;line-height:15px;color:#e2e2e2;letter-spacing:-0.451px;">Toon</span>
<div style="left:797.5px;top:85px;width:58.0px;height:17px;background:linear-gradient(180deg,#494949,#404040);border:1px solid #2e2e2e;box-shadow:inset 0 1px 0 #525252;"></div>
<span class="t" style="left:809.0px;top:86.0px;font-size:11px;line-height:15px;color:#e2e2e2;letter-spacing:-0.462px;">Muscle</span>
<div style="left:854.5px;top:85px;width:55.5px;height:17px;background:linear-gradient(180deg,#494949,#404040);border:1px solid #2e2e2e;box-shadow:inset 0 1px 0 #525252;"></div>
<span class="t" style="left:867.5px;top:86.0px;font-size:11px;line-height:15px;color:#e2e2e2;letter-spacing:-0.462px;">Fluids</span>
<div style="left:909px;top:85px;width:42px;height:17px;background:linear-gradient(180deg,#494949,#404040);border:1px solid #2e2e2e;box-shadow:inset 0 1px 0 #525252;"></div>
<span class="t" style="left:920.0px;top:86.0px;font-size:11px;line-height:15px;color:#e2e2e2;letter-spacing:-0.250px;">Fur</span>
<div style="left:950px;top:85px;width:47px;height:17px;background:linear-gradient(180deg,#494949,#404040);border:1px solid #2e2e2e;box-shadow:inset 0 1px 0 #525252;"></div>
<span class="t" style="left:962.0px;top:86.0px;font-size:11px;line-height:15px;color:#e2e2e2;letter-spacing:-0.223px;">Hair</span>
<div style="left:996px;top:85px;width:57px;height:17px;background:linear-gradient(180deg,#494949,#404040);border:1px solid #2e2e2e;box-shadow:inset 0 1px 0 #525252;"></div>
<span class="t" style="left:1007.0px;top:86.0px;font-size:11px;line-height:15px;color:#e2e2e2;letter-spacing:-0.159px;">nCloth</span>
<div style="left:1052px;top:85px;width:61.5px;height:17px;background:linear-gradient(180deg,#494949,#404040);border:1px solid #2e2e2e;box-shadow:inset 0 1px 0 #525252;"></div>
<span class="t" style="left:1064.0px;top:86.0px;font-size:11px;line-height:15px;color:#e2e2e2;letter-spacing:-0.180px;">Custom</span>
<div style="left:39px;top:105px;width:1236px;height:38px;background:#474747;border:1px solid #2e2e2e;border-radius:2px;"></div>
<div style="left:39px;top:145px;width:1236px;height:1px;background:#565656;"></div>
<div style="left:14px;top:147px;width:1262px;height:1px;background:#383838;"></div>
<svg style="left:1260px;top:82px;" width="14" height="16" viewBox="0 0 14 16"><ellipse cx="7" cy="3.500" rx="5.500" ry="2" fill="#777" stroke="#aaa" stroke-width=".8"/><path d="M2 4.500L3 14.500Q7 16.500 11 14.500L12 4.500" fill="#5c5c5c" stroke="#222" stroke-width=".8"/><path d="M5 6V14M7 6.500V14.500M9 6V14" stroke="#222" stroke-width="1"/></svg>
<div style="left:1256px;top:109px;width:15px;height:15px;background:#6c6c6c;border:1px solid #2e2e2e;border-radius:2px;"></div>
<div style="left:1256px;top:125px;width:15px;height:15px;background:#6c6c6c;border:1px solid #2e2e2e;border-radius:2px;"></div>
<svg style="left:1259px;top:114px;" width="9" height="6" viewBox="0 0 9 6"><path d="M.5 5L4.500 1L8.500 5Z" fill="#d8d8d8"/></svg>
<svg style="left:1259px;top:129.5px;" width="9" height="6" viewBox="0 0 9 6"><path d="M.5 1L4.500 5L8.500 1Z" fill="#d8d8d8"/></svg>
<svg style="left:0px;top:0px;" width="0" height="0" viewBox="0 0 0 0"><defs>
<radialGradient id="sph" cx=".38" cy=".35" r=".7"><stop offset="0" stop-color="#ddd5ae"/><stop offset=".5" stop-color="#a0976c"/><stop offset="1" stop-color="#463e20"/></radialGradient>
<radialGradient id="gsph" cx=".38" cy=".35" r=".7"><stop offset="0" stop-color="#b8b8b0"/><stop offset=".6" stop-color="#7c7c74"/><stop offset="1" stop-color="#3e3e38"/></radialGradient>
<linearGradient id="cyl" x1="0" y1="0" x2="1" y2="0"><stop offset="0" stop-color="#7d7450"/><stop offset=".35" stop-color="#cfc59a"/><stop offset="1" stop-color="#6a6140"/></linearGradient>
<linearGradient id="tanv" x1="0" y1="0" x2="1" y2="1"><stop offset="0" stop-color="#cfc59a"/><stop offset="1" stop-color="#8a8058"/></linearGradient>
</defs></svg>
<svg style="left:46px;top:110px;" width="32" height="30" viewBox="0 0 32 30"><ellipse cx="12" cy="23" rx="11" ry="4" fill="#000" opacity=".2"/><circle cx="16" cy="14.500" r="12" fill="url(#sph)" stroke="#2e2810" stroke-width="1"/><path d="M16 2.500V26.500M4.500 11Q16 15 27.500 11M4.500 18Q16 22 27.500 18" stroke="#2e2810" stroke-width="1" fill="none"/><path d="M10 4Q6 14.500 10 25M22 4Q26 14.500 22 25" stroke="#2e2810" stroke-width="1" fill="none"/></svg>
<svg style="left:82px;top:110px;" width="30" height="30" viewBox="0 0 30 30"><ellipse cx="9" cy="24" rx="9" ry="3" fill="#000" opacity=".2"/><path d="M4.7 9L22.6 11.4L22.6 25.7L4.7 22.8Z" fill="#a8a078" stroke="#2e2810" stroke-width="1"/><path d="M13.7 10.2L13.7 24.2M4.7 15.9L22.6 18.6" stroke="#2e2810" stroke-width="1" fill="none"/><path d="M12.4 3.7L25.8 5.3L22.6 11.4L4.7 9Z" fill="#cbc4a0" stroke="#2e2810" stroke-width="1"/><path d="M19.1 4.5L13.7 10.2M8.6 6.3L24.2 8.3" stroke="#2e2810" stroke-width="1" fill="none"/><path d="M22.6 11.4L25.8 5.3L25.8 21.2L22.6 25.7Z" fill="#7c7654" stroke="#2e2810" stroke-width="1"/><path d="M24.2 8.3L24.2 23.4M22.6 18.6L25.8 13.2" stroke="#2e2810" stroke-width="1" fill="none"/></svg>
<svg style="left:117px;top:110px;" width="28" height="30" viewBox="0 0 28 30"><ellipse cx="9" cy="24" rx="9" ry="3" fill="#000" opacity=".2"/><path d="M4 7V22Q14 30 24 22V7Z" fill="url(#cyl)"/><ellipse cx="14" cy="7" rx="10" ry="4.500" fill="#cfc59a" stroke="#2e2810"/><path d="M4 7V22Q14 30 24 22V7M4 14.500Q14 22 24 14.500M14 11.500V26M8 10.500V25M20 10.500V25" fill="none" stroke="#2e2810" stroke-width="1"/></svg>
<svg style="left:152px;top:110px;" width="28" height="30" viewBox="0 0 28 30"><ellipse cx="8" cy="24" rx="8" ry="3" fill="#000" opacity=".2"/><path d="M14 3L24 22Q14 28 4 22Z" fill="url(#cyl)" stroke="#2e2810"/><path d="M14 3L10 25.500M14 3L17 25.500M14 3L21 24" stroke="#2e2810" stroke-width=".9" fill="none"/></svg>
<svg style="left:183px;top:112px;" width="32" height="28" viewBox="0 0 32 28"><path d="M2 10L20 5L30 13L11 23Z" fill="#b8ae82" stroke="#2e2810" stroke-width="1"/><path d="M8.0 8.3L17.3 19.7M5.0 14.3L23.3 7.7M14.0 6.7L23.7 16.3M8.0 18.7L26.7 10.3" stroke="#2e2810" stroke-width="1" fill="none"/></svg>
<svg style="left:220px;top:112px;" width="32" height="28" viewBox="0 0 32 28"><ellipse cx="14" cy="21" rx="13" ry="4" fill="#000" opacity=".2"/><ellipse cx="16" cy="14.500" rx="13" ry="9.500" fill="url(#tanv)" stroke="#2e2810"/><ellipse cx="16" cy="13" rx="5.500" ry="3" fill="#4c4c4c" stroke="#2e2810"/><path d="M16 5V10M16 16V24M7 7.500L11.500 11.500M25 7.500L20.500 11.500M3.500 16L10.500 14M28.500 16L21.500 14M8 22L12.500 15.500M24 22L19.500 15.500" stroke="#2e2810" stroke-width="1"/></svg>
<svg style="left:258px;top:110px;" width="28" height="30" viewBox="0 0 28 30"><ellipse cx="8" cy="24" rx="8" ry="3" fill="#000" opacity=".2"/><path d="M14 2.500L4 20L13 26.500Z" fill="#a89e72"/><path d="M14 2.500L13 26.500L25.500 21Z" fill="#cfc59a"/><path d="M14 2.500L4 20L13 26.500L25.500 21ZM14 2.500L13 26.500" fill="none" stroke="#2e2810" stroke-width="1"/></svg>
<svg style="left:293px;top:110px;" width="28" height="30" viewBox="0 0 28 30"><ellipse cx="8" cy="24" rx="9" ry="3" fill="#000" opacity=".2"/><path d="M3.500 7V22Q13.500 30 23.500 22V7Z" fill="url(#cyl)"/><ellipse cx="13.500" cy="7" rx="10" ry="4.500" fill="#cfc59a" stroke="#2e2810"/><ellipse cx="13.500" cy="7" rx="5" ry="2.200" fill="#5a5438" stroke="#2e2810"/><path d="M3.500 7V22Q13.500 30 23.500 22V7M3.500 14.500Q13.500 22 23.500 14.500M13.500 11.500V26M7.500 10.500V25M19.500 10.500V25M13.500 2.500V5M5 5L9 6.500M22 5L18 6.500" fill="none" stroke="#2e2810" stroke-width="1"/></svg>
<svg style="left:325px;top:109px;" width="31" height="31" viewBox="0 0 31 31"><circle cx="15.500" cy="15" r="14" fill="#4a4a4a" stroke="#c8c8c8" stroke-width="1.200"/><path d="M5 9L14 5L24 11L13 16Z" fill="#b8ae82" stroke="#2e2810" stroke-width="1"/><path d="M9.5 7.0L18.5 13.5M9.0 12.5L19.0 8.0" stroke="#2e2810" stroke-width="1" fill="none"/><path d="M5 17L15 13L26 20L14 25.5Z" fill="#a89e72" stroke="#2e2810" stroke-width="1"/><path d="M10.0 15.0L20.0 22.8M9.5 21.2L20.5 16.5" stroke="#2e2810" stroke-width="1" fill="none"/></svg>
<svg style="left:358px;top:108px;" width="32" height="32" viewBox="0 0 32 32"><path d="M2.5 8.7L7.45 3.5L13.5 6.3L8.55 11.5Z" fill="#a8955a" stroke="#4a3c14" stroke-width=".8"/><circle cx="8" cy="7.5" r=".9" fill="#1a1a1a"/><path d="M11.0 6.4L15.95 1.2000000000000002L22.0 4.0L17.05 9.2Z" fill="#a8955a" stroke="#4a3c14" stroke-width=".8"/><circle cx="16.5" cy="5.2" r=".9" fill="#1a1a1a"/><path d="M10.5 16.825L15.0 11.95L20.5 14.575L16.0 19.45Z" fill="#b8dcf2" stroke="#2a4a60" stroke-width=".8"/><circle cx="15.5" cy="15.7" r=".9" fill="#1a1a1a"/><path d="M19.5 18.325L24.0 13.45L29.5 16.075L25.0 20.95Z" fill="#b8dcf2" stroke="#2a4a60" stroke-width=".8"/><circle cx="24.5" cy="17.2" r=".9" fill="#1a1a1a"/><path d="M5.500 21.500L17 27" stroke="#d81818" stroke-width="2.800"/><path d="M14.500 23L23 30L12 30.500Z" fill="#d81818"/></svg>
<svg style="left:392px;top:108px;" width="36" height="32" viewBox="0 0 36 32"><path d="M12 2A9 9 0 0 0 12 20Z" fill="url(#gsph)" opacity=".8"/><path d="M7 4.500Q5 11 7 17.500M3.500 8.500H12M3.500 14H12" stroke="#4a4a40" stroke-width=".8" fill="none" opacity=".8"/><ellipse cx="21" cy="27" rx="10" ry="3" fill="#000" opacity=".2"/><circle cx="23" cy="20" r="9.5" fill="url(#sph)" stroke="#2e2810" stroke-width="1"/><path d="M23 10.5V29.5M13.5 20H32.5M15.399999999999999 14.774999999999999Q23 17.15 30.6 14.774999999999999M15.399999999999999 25.225Q23 27.6 30.6 25.225M18.25 11.925Q15.399999999999999 20 18.25 28.075M27.75 11.925Q30.6 20 27.75 28.075" stroke="#2e2810" stroke-width=".9" fill="none"/></svg>
<svg style="left:428px;top:108px;" width="36" height="32" viewBox="0 0 36 32"><ellipse cx="9.500" cy="9.500" rx="7" ry="6.500" fill="url(#gsph)" opacity=".75"/><path d="M9.500 3V16M2.500 9.500H16.500" stroke="#4a4a40" stroke-width=".8" opacity=".8"/><ellipse cx="19" cy="27" rx="10" ry="3" fill="#000" opacity=".2"/><circle cx="21.5" cy="20" r="9.5" fill="url(#sph)" stroke="#2e2810" stroke-width="1"/><path d="M21.5 10.5V29.5M12.0 20H31.0M13.899999999999999 14.774999999999999Q21.5 17.15 29.1 14.774999999999999M13.899999999999999 25.225Q21.5 27.6 29.1 25.225M16.75 11.925Q13.899999999999999 20 16.75 28.075M26.25 11.925Q29.1 20 26.25 28.075" stroke="#2e2810" stroke-width=".9" fill="none"/></svg>
<svg style="left:464px;top:108px;" width="32" height="32" viewBox="0 0 32 32"><path d="M2.500 6L19 3L29.500 7V24L13 30.500L2.500 25Z" fill="#8a2a9a"/><path d="M2.500 6L13 11.500V30.500L2.500 25Z" fill="#a030b0"/><path d="M13 11.500L29.500 7V24L13 30.500Z" fill="#7a1a8a"/><path d="M2.500 6L19 3L29.500 7L13 11.500Z" fill="#6a3a7a"/><circle cx="17" cy="19" r="7" fill="#c060d0" opacity=".7"/><circle cx="15" cy="17" r="3" fill="#e8b0f0" opacity=".7"/><path d="M2.500 6L19 3L29.500 7V24L13 30.500L2.500 25ZM2.500 6L13 11.500L29.500 7M13 11.500V30.500" fill="none" stroke="#f4e4f8" stroke-width="1.300"/><path d="M19 3V20L29.500 24M19 20L2.500 25" stroke="#d8a0e0" stroke-width=".7" fill="none" opacity=".8"/></svg>
<svg style="left:498px;top:108px;" width="32" height="32" viewBox="0 0 32 32"><path d="M4 8L13 3L21 8L12 12Z" fill="#8a8468" opacity=".8" stroke="#3a3420" stroke-width=".7"/><path d="M4 8L21 8M13 3L12 12M8 5.500L16.500 10M17 5.500L8 10" stroke="#3a3420" stroke-width=".7" opacity=".8"/><path d="M3 18L19 9L30 19L12 28.500Z" fill="#b8ae82" stroke="#2e2810"/><path d="M19 9L12 28.500" stroke="#2e2810" stroke-width="1"/><path d="M19 9L12 28.500L30 19Z" fill="#cfc59a" stroke="#2e2810" stroke-width="1"/></svg>
<svg style="left:532px;top:110px;" width="34" height="30" viewBox="0 0 34 30"><path d="M2 11L14 4L27 13L14 23Z" fill="#a89e72" stroke="#2e2810" stroke-width="1"/><path d="M8.0 7.5L20.5 18.0M8.0 17.0L20.5 8.5" stroke="#2e2810" stroke-width="1" fill="none"/><path d="M10 6L17.500 2.500L30 12L23 16Z" fill="#b8ae82" stroke="#f4f4f4" stroke-width="1.300"/><path d="M22 14L22 26L25 23L27.500 27.500L29.500 26.500L27.200 22.200L31 21.500Z" fill="#b01818" stroke="#fff" stroke-width="1"/></svg>
<svg style="left:567px;top:109px;" width="34" height="30" viewBox="0 0 34 30"><path d="M2 11L13 6L25 14L13 24Z" fill="#b8ae82" stroke="#2e2810" stroke-width="1"/><path d="M7.5 8.5L19.0 19.0M7.5 17.5L19.0 10.0" stroke="#2e2810" stroke-width="1" fill="none"/><path d="M17 8L17 22L28 18V4.500Z" fill="#a89e72" stroke="#2e2810"/><path d="M17 8L22 11.500V25L17 22Z" fill="#b8ae82" stroke="#2e2810"/><path d="M22 11.500L32 7.500V20.500L22 25Z" fill="#8a8058" stroke="#2e2810"/><path d="M17 8L27 3L32 7.500L22 11.500Z" fill="#7ab4e4" stroke="#2e2810"/><circle cx="24.500" cy="7.200" r="1" fill="#123"/></svg>
<svg style="left:603px;top:108px;" width="34" height="30" viewBox="0 0 34 30"><path d="M3 8L10 4.500L16 10L9 14Z" fill="#8a8266" stroke="#4a4430" stroke-width=".8"/><path d="M16 4L23 2L29 7.500L22 10Z" fill="#8a8266" stroke="#4a4430" stroke-width=".8"/><path d="M6 21L24 12L31.500 18L13 28Z" fill="#a89e72" stroke="#2e2810"/><path d="M13.500 17.200L21 24L25.500 21.500L18 14.800Z" fill="#9ccaf0"/><path d="M14.500 16.700L22 23.500M17 15.400L24.500 22" stroke="#f2f8fc" stroke-width="1.200"/></svg>
<svg style="left:641px;top:109px;" width="30" height="30" viewBox="0 0 30 30"><ellipse cx="8" cy="24" rx="9" ry="3" fill="#000" opacity=".2"/><path d="M4 8L19 13V28L4 21Z" fill="#a89e72"/><path d="M19 13L26.500 8V21L19 28Z" fill="#8a8058"/><path d="M4 8L13 3L26.500 8L19 13Z" fill="#cfc59a"/><path d="M4 8L19 13V28L4 21ZM19 13L26.500 8V21L19 28M4 8L13 3L26.500 8" fill="none" stroke="#2e2810" stroke-width="1"/><path d="M11 10L25 9L19 20Z" fill="#8fc4ea" stroke="#2e2810" stroke-width=".9"/></svg>
<svg style="left:672px;top:109px;" width="34" height="30" viewBox="0 0 34 30"><path d="M5 6L18 2.500L26 10L13 14Z" fill="#8a8266" stroke="#5a5438" stroke-width=".8"/><path d="M2 16L12 12L21 22L11 27.500Z" fill="#b0a67a" stroke="#2e2810"/><path d="M16 11L25 7.500L33 17L24 21.500Z" fill="#b0a67a" stroke="#2e2810"/></svg>
<svg style="left:709px;top:109px;" width="30" height="30" viewBox="0 0 30 30"><path d="M2 8L14 3L24 10L12 16Z" fill="#8a8266" stroke="#5a5438" stroke-width="0.7"/><path d="M6.0 6.3L16.0 14.0M5.3 10.7L17.3 5.3M10.0 4.7L20.0 12.0M8.7 13.3L20.7 7.7" stroke="#5a5438" stroke-width="0.7" fill="none"/><path d="M2 15L14 11L26 19L12 27Z" fill="#b0a67a" stroke="#2e2810" stroke-width="1"/><path d="M8.0 13.0L19.0 23.0M7.0 21.0L20.0 15.0" stroke="#2e2810" stroke-width="1" fill="none"/><circle cx="9" cy="5" r="1.200" fill="#eee"/><circle cx="16" cy="7" r="1.200" fill="#eee"/><circle cx="13" cy="11" r="1.200" fill="#ffe"/><rect x="12.500" y="22.500" width="3" height="3" fill="#fff" stroke="#222" stroke-width=".6"/><path d="M17 12L17 23L19.500 20.500L21.500 24.500L23.500 23.500L21.500 19.800L25 19.300Z" fill="#b01818" stroke="#fff" stroke-width=".9"/></svg>
<svg style="left:743px;top:108px;" width="34" height="30" viewBox="0 0 34 30"><path d="M3 7L16 2.5L26 9L12 14Z" fill="#8a8266" stroke="#5a5438" stroke-width="0.7"/><path d="M9.5 4.8L19.0 11.5M7.5 10.5L21.0 5.8" stroke="#5a5438" stroke-width="0.7" fill="none"/><path d="M2 16L17 10L31 18L14 27.5Z" fill="#b0a67a" stroke="#2e2810" stroke-width="1"/><path d="M9.5 13.0L22.5 22.8M8.0 21.8L24.0 14.0" stroke="#2e2810" stroke-width="1" fill="none"/><path d="M16 15V6" stroke="#e02020" stroke-width="2.600"/><path d="M12 9L16 3L20 9Z" fill="#e02020"/><path d="M16 18L22 25" stroke="#f8f8f0" stroke-width="1.800"/></svg>
<svg style="left:778px;top:108px;" width="34" height="30" viewBox="0 0 34 30"><path d="M3 7L17 2.500L25 8.500L10 14Z" fill="#8a8266" stroke="#5a5438" stroke-width=".8"/><path d="M3 7L25 8.500" stroke="#5a5438" stroke-width=".8"/><path d="M3 17L19 10L31 19L12 28.500Z" fill="#b8ae82" stroke="#2e2810"/><path d="M19 10L12 28.500M3 17L19 10" stroke="#2e2810" stroke-width="1" fill="none"/></svg>
<svg style="left:813px;top:107px;" width="32" height="32" viewBox="0 0 32 32"><path d="M2 5L14 2.500L19 5V11L7 14L2 11Z" fill="#a89e72" stroke="#2e2810" stroke-width=".9"/><path d="M3 6.500L17 4.500" stroke="#f4f0e0" stroke-width="1.800"/><path d="M9 14L20 10L29.500 21L21 29.500L9 21Z" fill="#b0a67a" stroke="#2e2810"/><path d="M9 14L24 19.500L21 29.500M20 10L24 19.500L29.500 21" stroke="#2e2810" stroke-width="1" fill="none"/><rect x="22.500" y="18" width="3" height="3" fill="#f4f060" stroke="#222" stroke-width=".6"/></svg>
<svg style="left:849px;top:111px;" width="32" height="26" viewBox="0 0 32 26"><path d="M2 7L13 2L29 11L17 16Z" fill="#b0a67a" stroke="#2e2810" stroke-width="1"/><path d="M7.5 4.5L23.0 13.5M9.5 11.5L21.0 6.5" stroke="#2e2810" stroke-width="1" fill="none"/><path d="M4 19L12 15L18 20.500L9 24.500Z" fill="#7ab4e4" stroke="#1a3a5a" stroke-width="1"/><circle cx="11" cy="19.800" r=".9" fill="#123"/></svg>
<svg style="left:883px;top:109px;" width="32" height="30" viewBox="0 0 32 30"><defs><linearGradient id="scu" x1="0" y1="0" x2="1" y2="1"><stop offset="0" stop-color="#2a5aa0"/><stop offset=".5" stop-color="#9cc8f0"/><stop offset="1" stop-color="#2a5aa0"/></linearGradient></defs><path d="M1 20Q10 20 13 14Q16 8 19 14Q22 20 31 20L26 28Q16 24 1 20Z" fill="url(#scu)"/><ellipse cx="16" cy="18" rx="9" ry="3" fill="none" stroke="#d01840" stroke-width="1.500"/><path d="M16 16V6" stroke="#e02020" stroke-width="2.400"/><path d="M12.500 8L16 1.500L19.500 8Z" fill="#e02020"/><ellipse cx="16" cy="15" rx="3" ry="4" fill="#e8f4ff" opacity=".8"/></svg>
<svg style="left:917px;top:108px;" width="36" height="32" viewBox="0 0 36 32"><path d="M5.0 3.0L10.0 4.7L10.0 9.7L5.0 8.0Z" fill="#f4f4f4"/><path d="M5.0 8.0L10.0 9.7L10.0 14.7L5.0 13.0Z" fill="#0c0c0c"/><path d="M5.0 13.0L10.0 14.7L10.0 19.7L5.0 18.0Z" fill="#f4f4f4"/><path d="M5.0 18.0L10.0 19.7L10.0 24.7L5.0 23.0Z" fill="#0c0c0c"/><path d="M10.0 4.7L15.0 6.3L15.0 11.3L10.0 9.7Z" fill="#0c0c0c"/><path d="M10.0 9.7L15.0 11.3L15.0 16.3L10.0 14.7Z" fill="#f4f4f4"/><path d="M10.0 14.7L15.0 16.3L15.0 21.3L10.0 19.7Z" fill="#0c0c0c"/><path d="M10.0 19.7L15.0 21.3L15.0 26.3L10.0 24.7Z" fill="#f4f4f4"/><path d="M15.0 6.3L20.0 8.0L20.0 13.0L15.0 11.3Z" fill="#f4f4f4"/><path d="M15.0 11.3L20.0 13.0L20.0 18.0L15.0 16.3Z" fill="#0c0c0c"/><path d="M15.0 16.3L20.0 18.0L20.0 23.0L15.0 21.3Z" fill="#f4f4f4"/><path d="M15.0 21.3L20.0 23.0L20.0 28.0L15.0 26.3Z" fill="#0c0c0c"/><g transform="translate(21,5)"><path d="M0 9Q0 3.500 6 3V0L13 4.500L6 9.500V6.500Q3.500 7 3.500 10.500Z" fill="#3cc048" stroke="#1a5a20" stroke-width=".7"/></g><g transform="translate(7.500,19)"><path d="M-4 0H4M0 0V8M-4 0V3M4 0V3" stroke="#1a5a20" stroke-width="3.200" fill="none"/><path d="M-4 0H4M0 0V8M-4 0V3M4 0V3" stroke="#48d050" stroke-width="1.700" fill="none"/></g></svg>
<svg style="left:953px;top:108px;" width="36" height="32" viewBox="0 0 36 32"><path d="M3 5Q7 1 12 3L20 9V29Q12 24 4 24Z" fill="#0c0c0c"/><path d="M3.0 5.0L8.7 6.3L8.8 11.2L3.2 9.8Z" fill="#f4f4f4"/><path d="M3.2 9.8L8.8 11.2L9.0 16.0L3.5 14.5Z" fill="#0c0c0c"/><path d="M3.5 14.5L9.0 16.0L9.2 20.8L3.8 19.2Z" fill="#f4f4f4"/><path d="M3.8 19.2L9.2 20.8L9.3 25.7L4.0 24.0Z" fill="#0c0c0c"/><path d="M8.7 6.3L14.3 7.7L14.4 12.6L8.8 11.2Z" fill="#0c0c0c"/><path d="M8.8 11.2L14.4 12.6L14.5 17.5L9.0 16.0Z" fill="#f4f4f4"/><path d="M9.0 16.0L14.5 17.5L14.6 22.4L9.2 20.8Z" fill="#0c0c0c"/><path d="M9.2 20.8L14.6 22.4L14.7 27.3L9.3 25.7Z" fill="#f4f4f4"/><path d="M14.3 7.7L20.0 9.0L20.0 14.0L14.4 12.6Z" fill="#f4f4f4"/><path d="M14.4 12.6L20.0 14.0L20.0 19.0L14.5 17.5Z" fill="#0c0c0c"/><path d="M14.5 17.5L20.0 19.0L20.0 24.0L14.6 22.4Z" fill="#f4f4f4"/><path d="M14.6 22.4L20.0 24.0L20.0 29.0L14.7 27.3Z" fill="#0c0c0c"/><path d="M3 5Q7 1 12 3L20 9L8.500 6.500Z" fill="#f4f4f4"/><g transform="translate(20,5)"><path d="M0 9Q0 3.500 6 3V0L13 4.500L6 9.500V6.500Q3.500 7 3.500 10.500Z" fill="#3cc048" stroke="#1a5a20" stroke-width=".7"/></g><g transform="translate(19,22)"><path d="M-4 0H4M0 0V8M-4 0V3M4 0V3" stroke="#1a5a20" stroke-width="3.200" fill="none"/><path d="M-4 0H4M0 0V8M-4 0V3M4 0V3" stroke="#48d050" stroke-width="1.700" fill="none"/></g></svg>
<svg style="left:987px;top:108px;" width="36" height="32" viewBox="0 0 36 32"><clipPath id="cs"><path d="M8 3Q2 10 5 19Q11 28 23 25L25 11Q15 14 14 3Z"/></clipPath><g clip-path="url(#cs)"><path d="M1.0 2.0L7.5 2.0L7.5 8.5L1.0 8.5Z" fill="#f4f4f4"/><path d="M1.0 8.5L7.5 8.5L7.5 15.0L1.0 15.0Z" fill="#0c0c0c"/><path d="M1.0 15.0L7.5 15.0L7.5 21.5L1.0 21.5Z" fill="#f4f4f4"/><path d="M1.0 21.5L7.5 21.5L7.5 28.0L1.0 28.0Z" fill="#0c0c0c"/><path d="M7.5 2.0L14.0 2.0L14.0 8.5L7.5 8.5Z" fill="#0c0c0c"/><path d="M7.5 8.5L14.0 8.5L14.0 15.0L7.5 15.0Z" fill="#f4f4f4"/><path d="M7.5 15.0L14.0 15.0L14.0 21.5L7.5 21.5Z" fill="#0c0c0c"/><path d="M7.5 21.5L14.0 21.5L14.0 28.0L7.5 28.0Z" fill="#f4f4f4"/><path d="M14.0 2.0L20.5 2.0L20.5 8.5L14.0 8.5Z" fill="#f4f4f4"/><path d="M14.0 8.5L20.5 8.5L20.5 15.0L14.0 15.0Z" fill="#0c0c0c"/><path d="M14.0 15.0L20.5 15.0L20.5 21.5L14.0 21.5Z" fill="#f4f4f4"/><path d="M14.0 21.5L20.5 21.5L20.5 28.0L14.0 28.0Z" fill="#0c0c0c"/><path d="M20.5 2.0L27.0 2.0L27.0 8.5L20.5 8.5Z" fill="#0c0c0c"/><path d="M20.5 8.5L27.0 8.5L27.0 15.0L20.5 15.0Z" fill="#f4f4f4"/><path d="M20.5 15.0L27.0 15.0L27.0 21.5L20.5 21.5Z" fill="#0c0c0c"/><path d="M20.5 21.5L27.0 21.5L27.0 28.0L20.5 28.0Z" fill="#f4f4f4"/></g><g transform="translate(21,5)"><path d="M0 9Q0 3.500 6 3V0L13 4.500L6 9.500V6.500Q3.500 7 3.500 10.500Z" fill="#3cc048" stroke="#1a5a20" stroke-width=".7"/></g><g transform="translate(20,22)"><path d="M-4 0H4M0 0V8M-4 0V3M4 0V3" stroke="#1a5a20" stroke-width="3.200" fill="none"/><path d="M-4 0H4M0 0V8M-4 0V3M4 0V3" stroke="#48d050" stroke-width="1.700" fill="none"/></g></svg>
<svg style="left:1023px;top:107px;" width="34" height="33" viewBox="0 0 34 33"><path d="M2.0 8.0L6.3 6.0L6.3 11.0L2.0 13.0Z" fill="#0c0c0c"/><path d="M2.0 13.0L6.3 11.0L6.3 16.0L2.0 18.0Z" fill="#f4f4f4"/><path d="M2.0 18.0L6.3 16.0L6.3 21.0L2.0 23.0Z" fill="#0c0c0c"/><path d="M6.3 6.0L10.7 4.0L10.7 9.0L6.3 11.0Z" fill="#f4f4f4"/><path d="M6.3 11.0L10.7 9.0L10.7 14.0L6.3 16.0Z" fill="#0c0c0c"/><path d="M6.3 16.0L10.7 14.0L10.7 19.0L6.3 21.0Z" fill="#f4f4f4"/><path d="M10.7 4.0L15.0 2.0L15.0 7.0L10.7 9.0Z" fill="#0c0c0c"/><path d="M10.7 9.0L15.0 7.0L15.0 12.0L10.7 14.0Z" fill="#f4f4f4"/><path d="M10.7 14.0L15.0 12.0L15.0 17.0L10.7 19.0Z" fill="#0c0c0c"/><path d="M17.0 2.0L21.3 4.0L21.3 9.0L17.0 7.0Z" fill="#f4f4f4"/><path d="M17.0 7.0L21.3 9.0L21.3 14.0L17.0 12.0Z" fill="#0c0c0c"/><path d="M17.0 12.0L21.3 14.0L21.3 19.0L17.0 17.0Z" fill="#f4f4f4"/><path d="M21.3 4.0L25.7 6.0L25.7 11.0L21.3 9.0Z" fill="#0c0c0c"/><path d="M21.3 9.0L25.7 11.0L25.7 16.0L21.3 14.0Z" fill="#f4f4f4"/><path d="M21.3 14.0L25.7 16.0L25.7 21.0L21.3 19.0Z" fill="#0c0c0c"/><path d="M25.7 6.0L30.0 8.0L30.0 13.0L25.7 11.0Z" fill="#f4f4f4"/><path d="M25.7 11.0L30.0 13.0L30.0 18.0L25.7 16.0Z" fill="#0c0c0c"/><path d="M25.7 16.0L30.0 18.0L30.0 23.0L25.7 21.0Z" fill="#f4f4f4"/><path d="M16.0 19.0L20.0 21.0L16.0 23.0L12.0 21.0Z" fill="#0c0c0c"/><path d="M12.0 21.0L16.0 23.0L12.0 25.0L8.0 23.0Z" fill="#f4f4f4"/><path d="M8.0 23.0L12.0 25.0L8.0 27.0L4.0 25.0Z" fill="#0c0c0c"/><path d="M20.0 21.0L24.0 23.0L20.0 25.0L16.0 23.0Z" fill="#f4f4f4"/><path d="M16.0 23.0L20.0 25.0L16.0 27.0L12.0 25.0Z" fill="#0c0c0c"/><path d="M12.0 25.0L16.0 27.0L12.0 29.0L8.0 27.0Z" fill="#f4f4f4"/><path d="M24.0 23.0L28.0 25.0L24.0 27.0L20.0 25.0Z" fill="#0c0c0c"/><path d="M20.0 25.0L24.0 27.0L20.0 29.0L16.0 27.0Z" fill="#f4f4f4"/><path d="M16.0 27.0L20.0 29.0L16.0 31.0L12.0 29.0Z" fill="#0c0c0c"/><g transform="translate(16,12) scale(1.350)"><path d="M-4 0H4M0 0V8M-4 0V3M4 0V3" stroke="#1a5a20" stroke-width="3.200" fill="none"/><path d="M-4 0H4M0 0V8M-4 0V3M4 0V3" stroke="#48d050" stroke-width="1.700" fill="none"/></g></svg>
<svg style="left:1061px;top:109px;" width="28" height="29" viewBox="0 0 28 29"><rect x=".5" y=".5" width="26" height="27" fill="#eef0f4" stroke="#8aa6c6"/><rect x="1" y="1" width="25" height="3" fill="#6aa6dc"/><path d="M8.0 7.0L12.3 9.0L12.3 13.4L8.0 11.3Z" fill="#f4f4f4"/><path d="M8.0 11.3L12.3 13.4L12.3 17.9L8.0 15.7Z" fill="#0c0c0c"/><path d="M8.0 15.7L12.3 17.9L12.3 22.3L8.0 20.0Z" fill="#f4f4f4"/><path d="M12.3 9.0L16.7 11.0L16.7 15.6L12.3 13.4Z" fill="#0c0c0c"/><path d="M12.3 13.4L16.7 15.6L16.7 20.1L12.3 17.9Z" fill="#f4f4f4"/><path d="M12.3 17.9L16.7 20.1L16.7 24.7L12.3 22.3Z" fill="#0c0c0c"/><path d="M16.7 11.0L21.0 13.0L21.0 17.7L16.7 15.6Z" fill="#f4f4f4"/><path d="M16.7 15.6L21.0 17.7L21.0 22.3L16.7 20.1Z" fill="#0c0c0c"/><path d="M16.7 20.1L21.0 22.3L21.0 27.0L16.7 24.7Z" fill="#f4f4f4"/><g transform="translate(6,17) scale(.9)"><path d="M-4 0H4M0 0V8M-4 0V3M4 0V3" stroke="#1a5a20" stroke-width="3.200" fill="none"/><path d="M-4 0H4M0 0V8M-4 0V3M4 0V3" stroke="#48d050" stroke-width="1.700" fill="none"/></g></svg>
<div style="left:46px;top:153px;width:1px;height:714px;background:#6e6e6e;"></div>
<div style="left:45px;top:153px;width:1px;height:714px;background:#2c2c2c;"></div>
<span class="t" style="left:53.9px;top:155.0px;font-size:11px;line-height:15px;color:#d8d8d8;letter-spacing:-0.462px;">View</span>
<span class="t" style="left:91.0px;top:155.0px;font-size:11px;line-height:15px;color:#d8d8d8;letter-spacing:-0.395px;">Shading</span>
<span class="t" style="left:144.0px;top:155.0px;font-size:11px;line-height:15px;color:#d8d8d8;letter-spacing:-0.218px;">Lighting</span>
<span class="t" style="left:195.9px;top:155.0px;font-size:11px;line-height:15px;color:#d8d8d8;letter-spacing:-0.462px;">Show</span>
<span class="t" style="left:237.0px;top:155.0px;font-size:11px;line-height:15px;color:#d8d8d8;letter-spacing:-0.122px;">Renderer</span>
<span class="t" style="left:296.8px;top:155.0px;font-size:11px;line-height:15px;color:#d8d8d8;letter-spacing:-0.462px;">Panels</span>
<svg style="left:48.5px;top:172px;" width="6" height="20" viewBox="0 0 6 20"><path d="M2.500 0V20" stroke="#868686" stroke-width="1"/><path d="M3.500 0V20" stroke="#181818" stroke-width="1"/><rect x="4" y="6.0" width="1" height="8" fill="#181818"/><rect x="1.500" y="6.0" width="2.500" height="8" rx="1.200" fill="#3a3a3a" stroke="#9a9a9a" stroke-width=".9"/></svg>
<svg style="left:58px;top:173px;" width="18" height="17" viewBox="0 0 18 17"><circle cx="5" cy="5" r="4" fill="#9a9a9a" stroke="#1a1a1a" stroke-width="1"/><circle cx="5" cy="5" r="1.500" fill="#e8e8e8"/><circle cx="12" cy="5.500" r="3.600" fill="#9a9a9a" stroke="#1a1a1a" stroke-width="1"/><circle cx="12" cy="5.500" r="1.300" fill="#e8e8e8"/><path d="M4 9H13V14H4Z" fill="#1a1a1a"/><path d="M13 10.500L16.500 9V14L13 12.500Z" fill="#1a1a1a"/><path d="M6 12H11" stroke="#aaa" stroke-width="1.200"/></svg>
<svg style="left:78px;top:173px;" width="18" height="17" viewBox="0 0 18 17"><circle cx="5" cy="5" r="4" fill="#9a9a9a" stroke="#1a1a1a" stroke-width="1"/><circle cx="5" cy="5" r="1.500" fill="#e8e8e8"/><circle cx="12" cy="5.500" r="3.600" fill="#9a9a9a" stroke="#1a1a1a" stroke-width="1"/><circle cx="12" cy="5.500" r="1.300" fill="#e8e8e8"/><path d="M4 9H13V14H4Z" fill="#1a1a1a"/><path d="M13 10.500L16.500 9V14L13 12.500Z" fill="#1a1a1a"/><path d="M6 12H11" stroke="#aaa" stroke-width="1.200"/><rect x="9" y="7.500" width="7" height="8.500" fill="#f0f0f0" stroke="#222" stroke-width=".7"/><path d="M10.500 10H14.500M10.500 12H14.500M10.500 14H14.500" stroke="#333" stroke-width=".8"/></svg>
<svg style="left:99px;top:173px;" width="16" height="16" viewBox="0 0 16 16"><rect x=".5" y="2.500" width="14.500" height="12" fill="#eef2ee" stroke="#9aa"/><path d="M7.500 2.500V14.500" stroke="#aaa"/><path d="M8 0H13V12L10.500 9.500L8 12Z" fill="#2a9a3a" stroke="#156a20" stroke-width=".6"/><path d="M2.500 5V12M4.500 5V12" stroke="#c4c8c4" stroke-width=".8"/></svg>
<svg style="left:119px;top:173px;" width="17" height="17" viewBox="0 0 17 17"><path d="M1 11L12 2V11L5 15Z" fill="none" stroke="#b8a0d8" stroke-width="1.200"/><path d="M5 9.500L11 4.500V10L7 12.500Z" fill="#3aa040" stroke="#2a7030" stroke-width=".6"/><path d="M5 15L16 10.500L12 11" fill="none" stroke="#d8c8a0" stroke-width="1.200"/></svg>
<svg style="left:138px;top:172px;" width="18" height="19" viewBox="0 0 18 19"><path d="M4 1V9M0 5H8" stroke="#d82020" stroke-width="2" stroke-dasharray="2.500 1"/><circle cx="11.500" cy="8.500" r="3.800" fill="#f8e8e8" stroke="#d82020" stroke-width="1.200"/><path d="M9.500 8.500H13.500M11.500 6.500V10.500" stroke="#d82020" stroke-width="1.200"/><path d="M9 11.500L3.500 17.500" stroke="#d8a030" stroke-width="1.800"/></svg>
<svg style="left:159px;top:172px;" width="6" height="20" viewBox="0 0 6 20"><path d="M2.500 0V20" stroke="#868686" stroke-width="1"/><path d="M3.500 0V20" stroke="#181818" stroke-width="1"/><rect x="4" y="6.0" width="1" height="8" fill="#181818"/><rect x="1.500" y="6.0" width="2.500" height="8" rx="1.200" fill="#3a3a3a" stroke="#9a9a9a" stroke-width=".9"/></svg>
<div style="left:168.5px;top:173px;width:19px;height:19px;background:#6a7078;border:1px solid #33373b;border-radius:3px;"></div>
<svg style="left:170px;top:175px;" width="17" height="15" viewBox="0 0 17 15"><path d="M1 7.500L8.500 2.500L16 7.500L8.500 12.500Z" fill="#9cb8d4" stroke="#e8f0f8" stroke-width="1"/><path d="M4.700 5L12.200 10M12.200 5L4.700 10" stroke="#e8f0f8" stroke-width=".9"/></svg>
<svg style="left:190px;top:174px;" width="17" height="16" viewBox="0 0 17 16"><g transform="translate(.6,1.500) scale(.88,.8)"><rect x=".5" y=".5" width="16" height="15" fill="#f4f4f4" stroke="#bbb" stroke-width="1"/><rect x="1.500" y="2" width="14" height="12" fill="#1a1a1a"/><rect x="3" y="5" width="3" height="6" fill="#8ab8e8"/><rect x="7" y="5" width="3" height="6" fill="#8ab8e8"/><rect x="11" y="5" width="3" height="6" fill="#8ab8e8"/><path d="M2 3.500H15M2 12.500H15" stroke="#eee" stroke-width="1" stroke-dasharray="1.200 1.200"/></g></svg>
<svg style="left:210px;top:174px;" width="17" height="16" viewBox="0 0 17 16"><g transform="translate(.6,1.500) scale(.88,.8)"><rect x=".5" y=".5" width="16" height="15" fill="#f0f0f0" stroke="#888"/><circle cx="8.500" cy="8" r="5.500" fill="#3a7ac0"/><circle cx="7" cy="6" r="2" fill="#9cc8f0"/></g></svg>
<div style="left:229px;top:173px;width:19px;height:19px;background:#909090;border:1px solid #33373b;border-radius:3px;"></div>
<svg style="left:231px;top:175px;" width="15" height="15" viewBox="0 0 15 15"><rect x=".5" y=".5" width="14" height="14" fill="#b0b0b0" stroke="#787878"/><circle cx="7.500" cy="7.500" r="4.500" fill="#c8c8c8" stroke="#8a8a8a"/></svg>
<svg style="left:250px;top:174px;" width="17" height="16" viewBox="0 0 17 16"><g transform="translate(.6,1.500) scale(.88,.8)"><rect x=".5" y=".5" width="16" height="15" fill="#d0d0d0" stroke="#666"/><path d="M1 1L16 15M16 1L1 15M4 4H13V12H4Z" stroke="#444" stroke-width="1" fill="none"/><rect x="3" y="3" width="11" height="10" fill="none" stroke="#e8d0d8" stroke-width=".6"/></g></svg>
<svg style="left:270px;top:174px;" width="17" height="16" viewBox="0 0 17 16"><g transform="translate(.6,1.500) scale(.88,.8)"><rect x=".5" y=".5" width="16" height="15" fill="#d0ecd0" stroke="#2e8a2e" stroke-width="1.400"/><circle cx="6" cy="6" r="2.300" fill="#3a7ac0"/><circle cx="11.500" cy="5.500" r="2" fill="#5a9ad8"/><circle cx="9" cy="10.500" r="2.300" fill="#3a7ac0"/></g></svg>
<svg style="left:290px;top:174px;" width="17" height="16" viewBox="0 0 17 16"><g transform="translate(.6,1.500) scale(.88,.8)"><rect x=".5" y=".5" width="16" height="15" fill="#d8f0d8" stroke="#2e8a2e" stroke-width="1.400"/><text x="8.500" y="13" font-family="Liberation Serif" font-weight="bold" font-size="13" text-anchor="middle" fill="#111">T</text></g></svg>
<svg style="left:310px;top:172px;" width="6" height="20" viewBox="0 0 6 20"><path d="M2.500 0V20" stroke="#868686" stroke-width="1"/><path d="M3.500 0V20" stroke="#181818" stroke-width="1"/><rect x="4" y="6.0" width="1" height="8" fill="#181818"/><rect x="1.500" y="6.0" width="2.500" height="8" rx="1.200" fill="#3a3a3a" stroke="#9a9a9a" stroke-width=".9"/></svg>
<div style="left:319.5px;top:173px;width:19px;height:19px;background:#64686c;border:1px solid #33373b;border-radius:3px;"></div>
<svg style="left:321px;top:173px;" width="17" height="18" viewBox="0 0 17 18"><path d="M1.500 5L8 7.500V16.500L1.500 13.500Z" fill="none"/><path d="M8 7.500L15.500 5V13.500L8 16.500Z" fill="none"/><path d="M1.500 5L9 2.500L15.500 5L8 7.500Z" fill="none"/><path d="M1.500 5L8 7.500V16.500L1.500 13.500ZM8 7.500L15.500 5V13.500L8 16.500M1.500 5L9 2.500L15.500 5" fill="none" stroke="#e8e8e8" stroke-width="1"/></svg>
<svg style="left:341px;top:173px;" width="17" height="18" viewBox="0 0 17 18"><path d="M1.500 5L8 7.500V16.500L1.500 13.500Z" fill="#4a90d8"/><path d="M8 7.500L15.500 5V13.500L8 16.500Z" fill="#2a6ab0"/><path d="M1.500 5L9 2.500L15.500 5L8 7.500Z" fill="#8ac0f0"/><path d="M1.500 5L8 7.500V16.500L1.500 13.500ZM8 7.500L15.500 5V13.500L8 16.500M1.500 5L9 2.500L15.500 5" fill="none" stroke="#6aa8e0" stroke-width="0.6"/></svg>
<svg style="left:361px;top:173px;" width="17" height="18" viewBox="0 0 17 18"><path d="M1.500 5L8 7.500V16.500L1.500 13.500Z" fill="#4a90d8"/><path d="M8 7.500L15.500 5V13.500L8 16.500Z" fill="#3a7ac0"/><path d="M1.500 5L9 2.500L15.500 5L8 7.500Z" fill="#8ac0f0"/><path d="M1.500 5L8 7.500V16.500L1.500 13.500ZM8 7.500L15.500 5V13.500L8 16.500M1.500 5L9 2.500L15.500 5" fill="none" stroke="#f0f8ff" stroke-width="1.1"/></svg>
<svg style="left:381px;top:174px;" width="16" height="16" viewBox="0 0 16 16"><defs><clipPath id="ck"><circle cx="8" cy="8" r="7.500"/></clipPath></defs><g clip-path="url(#ck)"><rect width="16" height="16" fill="#fff"/><rect x="0" y="0" width="4" height="4" fill="#111"/><rect x="0" y="8" width="4" height="4" fill="#111"/><rect x="4" y="4" width="4" height="4" fill="#111"/><rect x="4" y="12" width="4" height="4" fill="#111"/><rect x="8" y="0" width="4" height="4" fill="#111"/><rect x="8" y="8" width="4" height="4" fill="#111"/><rect x="12" y="4" width="4" height="4" fill="#111"/><rect x="12" y="12" width="4" height="4" fill="#111"/></g><circle cx="8" cy="8" r="7.500" fill="none" stroke="#222" stroke-width=".6"/></svg>
<svg style="left:400px;top:174px;" width="16" height="16" viewBox="0 0 16 16"><defs><radialGradient id="yl" cx=".4" cy=".4" r=".6"><stop offset="0" stop-color="#ffff60"/><stop offset="1" stop-color="#a0a010"/></radialGradient><radialGradient id="gs" cx=".4" cy=".35" r=".65"><stop offset="0" stop-color="#e8e8e8"/><stop offset="1" stop-color="#6a6a6a"/></radialGradient><radialGradient id="go" cx=".4" cy=".35" r=".65"><stop offset="0" stop-color="#f8e0a0"/><stop offset=".5" stop-color="#b08030"/><stop offset="1" stop-color="#4a3410"/></radialGradient></defs><circle cx="8" cy="8" r="6.500" fill="url(#yl)"/></svg>
<svg style="left:421px;top:174px;" width="16" height="16" viewBox="0 0 16 16"><circle cx="8" cy="8" r="7" fill="url(#gs)"/></svg>
<svg style="left:441px;top:174px;" width="16" height="16" viewBox="0 0 16 16"><circle cx="8" cy="8" r="7" fill="url(#go)"/></svg>
<svg style="left:461px;top:172px;" width="6" height="20" viewBox="0 0 6 20"><path d="M2.500 0V20" stroke="#868686" stroke-width="1"/><path d="M3.500 0V20" stroke="#181818" stroke-width="1"/><rect x="4" y="6.0" width="1" height="8" fill="#181818"/><rect x="1.500" y="6.0" width="2.500" height="8" rx="1.200" fill="#3a3a3a" stroke="#9a9a9a" stroke-width=".9"/></svg>
<svg style="left:472px;top:174px;" width="19" height="18" viewBox="0 0 19 18"><rect x="1.500" y="1.500" width="13" height="11" fill="none" stroke="#4ad04a" stroke-width="1.200" stroke-dasharray="2 1.500"/><path d="M9 7L9 16L11.300 13.800L13 17L14.600 16.200L13 13.200L16 12.800Z" fill="#b01818" stroke="#fff" stroke-width=".8"/></svg>
<svg style="left:492px;top:172px;" width="6" height="20" viewBox="0 0 6 20"><path d="M2.500 0V20" stroke="#868686" stroke-width="1"/><path d="M3.500 0V20" stroke="#181818" stroke-width="1"/><rect x="4" y="6.0" width="1" height="8" fill="#181818"/><rect x="1.500" y="6.0" width="2.500" height="8" rx="1.200" fill="#3a3a3a" stroke="#9a9a9a" stroke-width=".9"/></svg>
<div style="left:502px;top:173px;width:18px;height:18px;background:#2e2e2e;border-radius:2px;"></div>
<div style="left:522px;top:173px;width:18px;height:18px;background:#2e2e2e;border-radius:2px;"></div>
<div style="left:542px;top:173px;width:18px;height:18px;background:#2e2e2e;border-radius:2px;"></div>
<svg style="left:503px;top:173px;" width="17" height="18" viewBox="0 0 17 18"><path d="M1.500 5L8 7.500V16.500L1.500 13.500ZM8 7.500L15.500 5V13.500L8 16.500M1.500 5L9 2.500L15.500 5" fill="none" stroke="#d8d8d8" stroke-width="1.200"/></svg>
<svg style="left:523px;top:174px;" width="16" height="16" viewBox="0 0 16 16"><rect x="2.500" y="5.500" width="8" height="8" fill="none" stroke="#d8d8d8" stroke-width="1.200"/><rect x="6" y="2.500" width="8" height="8" fill="none" stroke="#d8d8d8" stroke-width="1.200"/></svg>
<svg style="left:543px;top:174px;" width="16" height="16" viewBox="0 0 16 16"><path d="M4.500 8L11.500 4M4.500 8L11.500 12.500" stroke="#e8e8e8" stroke-width="1.200"/><circle cx="4.500" cy="8" r="2.300" fill="#e8e8e8"/><circle cx="11.800" cy="3.800" r="2.300" fill="#e8e8e8"/><circle cx="11.800" cy="12.500" r="2.300" fill="#e8e8e8"/></svg>
<div style="left:1043px;top:153px;width:1px;height:40px;background:#7a7a7a;"></div>
<div style="left:3px;top:153px;width:1px;height:714px;background:#353535;"></div>
<svg style="left:7px;top:157px;" width="32" height="6" viewBox="0 0 32 6"><rect x="0" y="0" width="1" height="1" fill="#6a6a6a"/><rect x="2" y="2" width="1" height="1" fill="#6a6a6a"/><rect x="1" y="1" width="1" height="1" fill="#2e2e2e"/><rect x="3" y="3" width="1" height="1" fill="#2e2e2e"/><rect x="4" y="0" width="1" height="1" fill="#6a6a6a"/><rect x="6" y="2" width="1" height="1" fill="#6a6a6a"/><rect x="5" y="1" width="1" height="1" fill="#2e2e2e"/><rect x="7" y="3" width="1" height="1" fill="#2e2e2e"/><rect x="8" y="0" width="1" height="1" fill="#6a6a6a"/><rect x="10" y="2" width="1" height="1" fill="#6a6a6a"/><rect x="9" y="1" width="1" height="1" fill="#2e2e2e"/><rect x="11" y="3" width="1" height="1" fill="#2e2e2e"/><rect x="12" y="0" width="1" height="1" fill="#6a6a6a"/><rect x="14" y="2" width="1" height="1" fill="#6a6a6a"/><rect x="13" y="1" width="1" height="1" fill="#2e2e2e"/><rect x="15" y="3" width="1" height="1" fill="#2e2e2e"/><rect x="16" y="0" width="1" height="1" fill="#6a6a6a"/><rect x="18" y="2" width="1" height="1" fill="#6a6a6a"/><rect x="17" y="1" width="1" height="1" fill="#2e2e2e"/><rect x="19" y="3" width="1" height="1" fill="#2e2e2e"/><rect x="20" y="0" width="1" height="1" fill="#6a6a6a"/><rect x="22" y="2" width="1" height="1" fill="#6a6a6a"/><rect x="21" y="1" width="1" height="1" fill="#2e2e2e"/><rect x="23" y="3" width="1" height="1" fill="#2e2e2e"/><rect x="24" y="0" width="1" height="1" fill="#6a6a6a"/><rect x="26" y="2" width="1" height="1" fill="#6a6a6a"/><rect x="25" y="1" width="1" height="1" fill="#2e2e2e"/><rect x="27" y="3" width="1" height="1" fill="#2e2e2e"/><rect x="28" y="0" width="1" height="1" fill="#6a6a6a"/><rect x="30" y="2" width="1" height="1" fill="#6a6a6a"/><rect x="29" y="1" width="1" height="1" fill="#2e2e2e"/><rect x="31" y="3" width="1" height="1" fill="#2e2e2e"/></svg>
<div style="left:5px;top:164px;width:35px;height:35px;background:#a4a4a4;border:1px solid #5c5c5c;border-radius:2px;box-shadow:0 0 0 1px #333;"></div>
<div style="left:5px;top:201px;width:35px;height:35px;background:#444444;border:1px solid #5c5c5c;border-radius:2px;box-shadow:0 0 0 1px #333;"></div>
<div style="left:5px;top:238px;width:35px;height:35px;background:#444444;border:1px solid #5c5c5c;border-radius:2px;box-shadow:0 0 0 1px #333;"></div>
<div style="left:5px;top:275px;width:35px;height:35px;background:#444444;border:1px solid #5c5c5c;border-radius:2px;box-shadow:0 0 0 1px #333;"></div>
<div style="left:5px;top:312px;width:35px;height:35px;background:#444444;border:1px solid #5c5c5c;border-radius:2px;box-shadow:0 0 0 1px #333;"></div>
<div style="left:5px;top:349px;width:35px;height:35px;background:#444444;border:1px solid #5c5c5c;border-radius:2px;box-shadow:0 0 0 1px #333;"></div>
<div style="left:5px;top:386px;width:35px;height:35px;background:#444444;border:1px solid #5c5c5c;border-radius:2px;box-shadow:0 0 0 1px #333;"></div>
<div style="left:5px;top:423px;width:35px;height:35px;background:#444444;border:1px solid #5c5c5c;border-radius:2px;box-shadow:0 0 0 1px #333;"></div>
<div style="left:5px;top:460px;width:35px;height:35px;background:#444444;border:1px solid #5c5c5c;border-radius:2px;box-shadow:0 0 0 1px #333;"></div>
<div style="left:5px;top:497px;width:35px;height:35px;background:#444444;border:1px solid #5c5c5c;border-radius:2px;box-shadow:0 0 0 1px #333;"></div>
<svg style="left:5px;top:164px;" width="35" height="35" viewBox="0 0 35 35"><path d="M12 9.500L12 24.700L15.500 21.800L18.500 28.500L21.500 27.200L18.600 20.800L25 20.300Z" fill="#a81818" stroke="#fff" stroke-width="1.500" stroke-linejoin="round"/></svg>
<svg style="left:5px;top:201px;" width="35" height="35" viewBox="0 0 35 35"><path d="M5.800 8.600Q6 5.500 9.600 5.500L19 5.500Q24 6 24.200 9.300L23.500 13.700M5.800 8.600L7 15Q10.500 18 10 20.500Q6 24 6.400 26.400Q8 28.500 11.500 28.300L16.600 25.800" fill="none" stroke="#b8b8b8" stroke-width="1.300" stroke-dasharray="4 2.500"/><path d="M17.800 14.500L17.800 29.700L21.300 26.800L24.300 33.500L27.300 32.200L24.400 25.800L30.800 25.300Z" fill="#a81818" stroke="#fff" stroke-width="1.400" stroke-linejoin="round"/></svg>
<svg style="left:5px;top:238px;" width="35" height="35" viewBox="0 0 35 35"><ellipse cx="15" cy="23" rx="10" ry="6" fill="none" stroke="#c01818" stroke-width="3"/><path d="M30 5L18 18" stroke="#8a5a3a" stroke-width="2.400"/><path d="M19 16Q14 17 11 23Q17 23 21 18Z" fill="#f4f0e0" stroke="#555" stroke-width=".6"/><rect x="6.500" y="14.500" width="3" height="3" fill="#ffe870" stroke="#222" stroke-width=".6"/><rect x="7" y="25" width="3" height="3" fill="#ffe870" stroke="#222" stroke-width=".6"/><rect x="16.500" y="25.500" width="3" height="3" fill="#ffe870" stroke="#222" stroke-width=".6"/></svg>
<svg style="left:5px;top:275px;" width="35" height="35" viewBox="0 0 35 35"><defs><linearGradient id="cn" x1="0" y1="0" x2="1" y2="0"><stop offset="0" stop-color="#2a62a8"/><stop offset=".45" stop-color="#8cc4f4"/><stop offset="1" stop-color="#1f4f90"/></linearGradient><radialGradient id="bs" cx=".38" cy=".32" r=".7"><stop offset="0" stop-color="#a8d4f8"/><stop offset=".5" stop-color="#3a7ac0"/><stop offset="1" stop-color="#143a6a"/></radialGradient></defs><path d="M13 4L19 20H9Z" fill="#888" opacity=".5"/><path d="M19 5L25 22H13Z" fill="#9ab" opacity=".6"/><path d="M24 7L31 26Q24 30 17 26Z" fill="url(#cn)"/><path d="M4 21L20 29" stroke="#c81818" stroke-width="3.500"/><path d="M16 31L26 31.500L20 24Z" fill="#c81818"/></svg>
<svg style="left:5px;top:312px;" width="35" height="35" viewBox="0 0 35 35"><path d="M7 16Q2 24 10 27M29 17Q33 27 22 31" fill="none" stroke="#c81818" stroke-width="4"/><path d="M12 32L24 33.500L20 27Z" fill="#c81818"/><circle cx="17" cy="15" r="9.500" fill="url(#bs)"/></svg>
<svg style="left:5px;top:349px;" width="35" height="35" viewBox="0 0 35 35"><path d="M5 4L14 13M30 4L22 13M5 31L14 22M30 31L22 22" stroke="#c81818" stroke-width="4"/><path d="M3 2L11 4L5 10ZM32 2L24 4L30 10ZM3 33L11 31L5 25ZM32 33L24 31L30 25Z" fill="#c81818"/><path d="M9 13L17 16V27L9 23Z" fill="#4a8ad0"/><path d="M17 16L25 13V23L17 27Z" fill="#2a6ab0"/><path d="M9 13L17 10L25 13L17 16Z" fill="#a8d4f8"/></svg>
<svg style="left:5px;top:386px;" width="35" height="35" viewBox="0 0 35 35"><path d="M5 10L17 5L30 10L30 24L17 30L5 24ZM5 10L17 15L30 10M17 15V30" fill="none" stroke="#d8d8d8" stroke-width="1.200"/><circle cx="17" cy="19" r="6" fill="url(#bs)"/><path d="M17 16V6" stroke="#28a838" stroke-width="3"/><path d="M13.500 8L17 2L20.500 8Z" fill="#28a838"/><path d="M17 20L27 25" stroke="#c81818" stroke-width="2.500"/><path d="M17 20L7 25" stroke="#2848c8" stroke-width="2.500"/><rect x="3.5" y="8.5" width="3" height="3" fill="#ffe870" stroke="#222" stroke-width=".5"/><rect x="15.5" y="3.5" width="3" height="3" fill="#ffe870" stroke="#222" stroke-width=".5"/><rect x="28.5" y="8.5" width="3" height="3" fill="#ffe870" stroke="#222" stroke-width=".5"/><rect x="3.5" y="22.5" width="3" height="3" fill="#ffe870" stroke="#222" stroke-width=".5"/><rect x="28.5" y="22.5" width="3" height="3" fill="#ffe870" stroke="#222" stroke-width=".5"/><rect x="15.5" y="28.5" width="3" height="3" fill="#ffe870" stroke="#222" stroke-width=".5"/></svg>
<svg style="left:5px;top:423px;" width="35" height="35" viewBox="0 0 35 35"><path d="M5 21L24 15L30 22L9 30Z" fill="#5a9ad8" stroke="#dfeefa" stroke-width="0.8"/><path d="M11.3 19.0L16.0 27.3M6.3 24.0L26.0 17.3M17.7 17.0L23.0 24.7M7.7 27.0L28.0 19.7" stroke="#dfeefa" stroke-width="0.8" fill="none"/><path d="M17 20V8" stroke="#c81818" stroke-width="2.500"/><path d="M13.500 10L17 3.500L20.500 10Z" fill="#c81818"/><rect x="15.5" y="12.5" width="3" height="3" fill="#ffe870" stroke="#222" stroke-width=".5"/><rect x="9.5" y="17.5" width="3" height="3" fill="#ffe870" stroke="#222" stroke-width=".5"/><rect x="21.5" y="16.5" width="3" height="3" fill="#ffe870" stroke="#222" stroke-width=".5"/><rect x="15.5" y="19.5" width="3" height="3" fill="#ffe870" stroke="#222" stroke-width=".5"/></svg>
<svg style="left:5px;top:460px;" width="35" height="35" viewBox="0 0 35 35"><path d="M17 20V7" stroke="#28a838" stroke-width="3"/><path d="M13 9L17 2.500L21 9Z" fill="#28a838"/><path d="M17 20L27 27" stroke="#c81818" stroke-width="3"/><path d="M29.500 29L22 27.500L26 22.500Z" fill="#c81818"/><path d="M17 20L7 22" stroke="#2848c8" stroke-width="3"/><path d="M3 23L9.500 18.500L10.500 25Z" fill="#2848c8"/><circle cx="17" cy="20" r="2.500" fill="#d8d8d8"/></svg>
<div style="left:5px;top:546px;width:34px;height:34px;background:linear-gradient(180deg,#f2f2f2,#b2b2b2);border:1px solid #3a3a3a;border-radius:2px;"></div>
<svg style="left:5px;top:546px;" width="34" height="34" viewBox="0 0 34 34"><path d="M5.5 16.0L17.0 8L28.5 16.0L17.0 24ZM11.25 12.0L22.75 20.0M22.75 12.0L11.25 20.0" fill="none" stroke="#484848" stroke-width="1.4"/><path d="M8 22V27.175" stroke="#28b838" stroke-width="1.7249999999999999"/><path d="M8 27.175L3.9750000000000005 30.049999999999997" stroke="#2a3ad8" stroke-width="1.7249999999999999"/><path d="M8 27.175L12.024999999999999 30.049999999999997" stroke="#d82828" stroke-width="1.7249999999999999"/></svg>
<div style="left:5px;top:584px;width:34px;height:34px;background:linear-gradient(180deg,#f2f2f2,#b2b2b2);border:1px solid #3a3a3a;border-radius:2px;"></div>
<svg style="left:5px;top:584px;" width="34" height="34" viewBox="0 0 34 34"><path d="M16.500 0V34M0 17H34" stroke="#3a3a3a" stroke-width="1.400"/><path d="M8.500 3.500V14M3 8.500H14M8.500 20.500V31M3 25.500H14M25.500 20.500V31M20 25.500H31" stroke="#3c3c3c" stroke-width="1.500"/><path d="M19 7.0L25.5 2.5L32 7.0L25.5 11.5ZM22.25 4.75L28.75 9.25M28.75 4.75L22.25 9.25" fill="none" stroke="#484848" stroke-width="1.1"/><path d="M21 10V13.6" stroke="#28b838" stroke-width="1.2000000000000002"/><path d="M21 13.6L18.2 15.600000000000001" stroke="#2a3ad8" stroke-width="1.2000000000000002"/><path d="M21 13.6L23.8 15.600000000000001" stroke="#d82828" stroke-width="1.2000000000000002"/></svg>
<div style="left:5px;top:622px;width:17px;height:34px;background:#303030;border:1px solid #3a3a3a;border-radius:2px 0 0 2px;"></div>
<div style="left:22px;top:622px;width:17px;height:34px;background:linear-gradient(180deg,#f2f2f2,#b2b2b2);border:1px solid #3a3a3a;border-left:none;border-radius:0 2px 2px 0;"></div>
<svg style="left:5px;top:622px;" width="34" height="34" viewBox="0 0 34 34"><path d="M3 4.500H13" stroke="#e0e0e0" stroke-width="1.200"/><path d="M3 8.500H5M7 8.500H11M3 12.500H5M7 12.500H13M3 16.500H5M7 16.500H11M3 20.500H5M7 20.500H13M3 24.500H5M7 24.500H11" stroke="#e0e0e0" stroke-width="1.200"/><path d="M19 14.5L25.5 10L32 14.5L25.5 19ZM22.25 12.25L28.75 16.75M28.75 12.25L22.25 16.75" fill="none" stroke="#484848" stroke-width="1.1"/><path d="M21 24V27.6" stroke="#28b838" stroke-width="1.2000000000000002"/><path d="M21 27.6L18.2 29.6" stroke="#2a3ad8" stroke-width="1.2000000000000002"/><path d="M21 27.6L23.8 29.6" stroke="#d82828" stroke-width="1.2000000000000002"/></svg>
<div style="left:5px;top:660px;width:34px;height:34px;background:linear-gradient(180deg,#f2f2f2,#b2b2b2);border:1px solid #3a3a3a;border-radius:2px;"></div>
<svg style="left:5px;top:660px;" width="34" height="34" viewBox="0 0 34 34"><path d="M0 17H34" stroke="#3a3a3a" stroke-width="1.400"/><path d="M6 8.0L16.5 1.5L27 8.0L16.5 14.5ZM11.25 4.75L21.75 11.25M21.75 4.75L11.25 11.25" fill="none" stroke="#484848" stroke-width="1.3"/><path d="M4 9V12.6" stroke="#28b838" stroke-width="1.2000000000000002"/><path d="M4 12.6L1.1999999999999997 14.600000000000001" stroke="#2a3ad8" stroke-width="1.2000000000000002"/><path d="M4 12.6L6.800000000000001 14.600000000000001" stroke="#d82828" stroke-width="1.2000000000000002"/><path d="M6 25H33" stroke="#555" stroke-width=".9"/><path d="M7 18V33" stroke="#555" stroke-width=".8"/><path d="M13.500 17V33" stroke="#c82838" stroke-width="1.100"/><path d="M7 31Q10 19 13.500 19Q17 19 20 28Q22 32 25 28Q28 23 33 22" fill="none" stroke="#5a6a80" stroke-width="1.300"/><path d="M3 20V31" stroke="#d8b020" stroke-width="1.600" stroke-dasharray="1.500 2"/></svg>
<div style="left:5px;top:698px;width:17px;height:34px;background:#6a6a6a;border:1px solid #3a3a3a;border-radius:2px 0 0 2px;"></div>
<div style="left:22px;top:698px;width:17px;height:34px;background:linear-gradient(180deg,#f2f2f2,#b2b2b2);border:1px solid #3a3a3a;border-left:none;border-radius:0 2px 2px 0;"></div>
<svg style="left:5px;top:698px;" width="34" height="34" viewBox="0 0 34 34"><rect x="1" y="1" width="4" height="32" fill="#8a8a8a"/><path d="M3 3V31" stroke="#444" stroke-width="1" stroke-dasharray="1 1"/><rect x="6" y="1" width="11" height="32" fill="#3a3a3a"/><rect x="7.500" y="4" width="3" height="3" fill="none" stroke="#e04040" stroke-width="1.100"/><rect x="12.500" y="4" width="3" height="3" fill="none" stroke="#e04040" stroke-width="1.100"/><rect x="7.500" y="10" width="3" height="3" fill="none" stroke="#40c040" stroke-width="1.100"/><rect x="12.500" y="10" width="3" height="3" fill="none" stroke="#40c040" stroke-width="1.100"/><rect x="8.500" y="21" width="6" height="6" fill="none" stroke="#60e060" stroke-width="1.200"/><path d="M19 14.5L25.5 10L32 14.5L25.5 19ZM22.25 12.25L28.75 16.75M28.75 12.25L22.25 16.75" fill="none" stroke="#484848" stroke-width="1.1"/><path d="M21 24V27.6" stroke="#28b838" stroke-width="1.2000000000000002"/><path d="M21 27.6L18.2 29.6" stroke="#2a3ad8" stroke-width="1.2000000000000002"/><path d="M21 27.6L23.8 29.6" stroke="#d82828" stroke-width="1.2000000000000002"/></svg>
<div style="left:5px;top:736px;width:34px;height:34px;background:linear-gradient(180deg,#f2f2f2,#b2b2b2);border:1px solid #3a3a3a;border-radius:2px;"></div>
<div style="left:22px;top:736px;width:17px;height:17px;background:#3a3a3a;border:1px solid #3a3a3a;"></div>
<svg style="left:5px;top:736px;" width="34" height="34" viewBox="0 0 34 34"><path d="M0 17H34M17 0V17" stroke="#3a3a3a" stroke-width="1.400"/><path d="M2 6.5L8.5 2L15 6.5L8.5 11ZM5.25 4.25L11.75 8.75M11.75 4.25L5.25 8.75" fill="none" stroke="#484848" stroke-width="1.1"/><path d="M4 9V12.6" stroke="#28b838" stroke-width="1.2000000000000002"/><path d="M4 12.6L1.1999999999999997 14.600000000000001" stroke="#2a3ad8" stroke-width="1.2000000000000002"/><path d="M4 12.6L6.800000000000001 14.600000000000001" stroke="#d82828" stroke-width="1.2000000000000002"/><rect x="20" y="3" width="6" height="3" fill="none" stroke="#e8e870" stroke-width="1"/><rect x="24" y="8" width="6" height="3" fill="none" stroke="#e8e870" stroke-width="1"/><path d="M6 25H33" stroke="#555" stroke-width=".9"/><path d="M13.500 17V33" stroke="#c82838" stroke-width="1.100"/><path d="M7 31Q10 19 13.500 19Q17 19 20 28Q22 32 25 28Q28 23 33 22" fill="none" stroke="#5a6a80" stroke-width="1.300"/></svg>
<div style="left:5px;top:773px;width:32px;height:31px;background:#444444;border:1px solid #565656;border-radius:2px;box-shadow:0 0 0 1px #333;"></div>
<div style="left:3px;top:828px;width:38px;height:1px;background:#353535;"></div>
<svg style="left:17px;top:785px;" width="8" height="6" viewBox="0 0 8 6"><path d="M1 1.500H7L4 4.500Z" fill="#555" stroke="#a8a8a8" stroke-width=".8"/></svg>
<div style="left:7px;top:832px;width:30px;height:30px;background:linear-gradient(135deg,#262626,#343434 50%,#505050);border:1px solid #303030;border-radius:4px;"></div>
<svg style="left:7px;top:832px;" width="30" height="30" viewBox="0 0 30 30"><path d="M9 6Q19 4 22 11Q24 19 19 25M9 6Q14 9 13 14Q12 17 9 18M19 25Q20 20 16 19Q13 19 14 23Q16 26 19 25M13 9Q19 11 19 18M9 18Q11 20 10 23" fill="none" stroke="#c8c8c8" stroke-width="1.300"/></svg>
<div style="left:1044px;top:151px;width:2px;height:717px;background:#383838;"></div>
<svg style="left:1054px;top:159px;" width="32" height="5" viewBox="0 0 32 5"><rect x="0" y="0" width="1" height="1" fill="#6e6e6e"/><rect x="2" y="2" width="1" height="1" fill="#6e6e6e"/><rect x="1" y="1" width="1" height="1" fill="#303030"/><rect x="3" y="3" width="1" height="1" fill="#303030"/><rect x="4" y="0" width="1" height="1" fill="#6e6e6e"/><rect x="6" y="2" width="1" height="1" fill="#6e6e6e"/><rect x="5" y="1" width="1" height="1" fill="#303030"/><rect x="7" y="3" width="1" height="1" fill="#303030"/><rect x="8" y="0" width="1" height="1" fill="#6e6e6e"/><rect x="10" y="2" width="1" height="1" fill="#6e6e6e"/><rect x="9" y="1" width="1" height="1" fill="#303030"/><rect x="11" y="3" width="1" height="1" fill="#303030"/><rect x="12" y="0" width="1" height="1" fill="#6e6e6e"/><rect x="14" y="2" width="1" height="1" fill="#6e6e6e"/><rect x="13" y="1" width="1" height="1" fill="#303030"/><rect x="15" y="3" width="1" height="1" fill="#303030"/><rect x="16" y="0" width="1" height="1" fill="#6e6e6e"/><rect x="18" y="2" width="1" height="1" fill="#6e6e6e"/><rect x="17" y="1" width="1" height="1" fill="#303030"/><rect x="19" y="3" width="1" height="1" fill="#303030"/><rect x="20" y="0" width="1" height="1" fill="#6e6e6e"/><rect x="22" y="2" width="1" height="1" fill="#6e6e6e"/><rect x="21" y="1" width="1" height="1" fill="#303030"/><rect x="23" y="3" width="1" height="1" fill="#303030"/><rect x="24" y="0" width="1" height="1" fill="#6e6e6e"/><rect x="26" y="2" width="1" height="1" fill="#6e6e6e"/><rect x="25" y="1" width="1" height="1" fill="#303030"/><rect x="27" y="3" width="1" height="1" fill="#303030"/><rect x="28" y="0" width="1" height="1" fill="#6e6e6e"/><rect x="30" y="2" width="1" height="1" fill="#6e6e6e"/><rect x="29" y="1" width="1" height="1" fill="#303030"/><rect x="31" y="3" width="1" height="1" fill="#303030"/></svg>
<svg style="left:1219px;top:159px;" width="31" height="5" viewBox="0 0 31 5"><rect x="0" y="0" width="1" height="1" fill="#6e6e6e"/><rect x="2" y="2" width="1" height="1" fill="#6e6e6e"/><rect x="1" y="1" width="1" height="1" fill="#303030"/><rect x="3" y="3" width="1" height="1" fill="#303030"/><rect x="4" y="0" width="1" height="1" fill="#6e6e6e"/><rect x="6" y="2" width="1" height="1" fill="#6e6e6e"/><rect x="5" y="1" width="1" height="1" fill="#303030"/><rect x="7" y="3" width="1" height="1" fill="#303030"/><rect x="8" y="0" width="1" height="1" fill="#6e6e6e"/><rect x="10" y="2" width="1" height="1" fill="#6e6e6e"/><rect x="9" y="1" width="1" height="1" fill="#303030"/><rect x="11" y="3" width="1" height="1" fill="#303030"/><rect x="12" y="0" width="1" height="1" fill="#6e6e6e"/><rect x="14" y="2" width="1" height="1" fill="#6e6e6e"/><rect x="13" y="1" width="1" height="1" fill="#303030"/><rect x="15" y="3" width="1" height="1" fill="#303030"/><rect x="16" y="0" width="1" height="1" fill="#6e6e6e"/><rect x="18" y="2" width="1" height="1" fill="#6e6e6e"/><rect x="17" y="1" width="1" height="1" fill="#303030"/><rect x="19" y="3" width="1" height="1" fill="#303030"/><rect x="20" y="0" width="1" height="1" fill="#6e6e6e"/><rect x="22" y="2" width="1" height="1" fill="#6e6e6e"/><rect x="21" y="1" width="1" height="1" fill="#303030"/><rect x="23" y="3" width="1" height="1" fill="#303030"/><rect x="24" y="0" width="1" height="1" fill="#6e6e6e"/><rect x="26" y="2" width="1" height="1" fill="#6e6e6e"/><rect x="25" y="1" width="1" height="1" fill="#303030"/><rect x="27" y="3" width="1" height="1" fill="#303030"/></svg>
<span class="t" style="left:1095.0px;top:154.5px;font-size:10px;line-height:14px;color:#e0e0e0;letter-spacing:-0.341px;">Channel Box / Layer Editor</span>
<div style="left:1251px;top:154px;width:12px;height:13px;background:#484848;border:1px solid #2a2a2a;border-radius:2px;"></div>
<div style="left:1266px;top:154px;width:12px;height:13px;background:#484848;border:1px solid #2a2a2a;border-radius:2px;"></div>
<svg style="left:1251px;top:154px;" width="12" height="13" viewBox="0 0 12 13"><rect x="4.500" y="3" width="5" height="4" fill="#484848" stroke="#000" stroke-width="1.400"/><rect x="2.500" y="5.500" width="5" height="4" fill="#484848" stroke="#000" stroke-width="1.400"/></svg>
<svg style="left:1266px;top:154px;" width="12" height="13" viewBox="0 0 12 13"><path d="M2.500 3L9.500 10M9.500 3L2.500 10" stroke="#000" stroke-width="1.500"/></svg>
<svg style="left:1217px;top:171px;" width="18" height="19" viewBox="0 0 18 19"><path d="M9 11V3" stroke="#28b838" stroke-width="2.200"/><path d="M6 5L9 0L12 5Z" fill="#28b838"/><path d="M9 11L15 16" stroke="#d82828" stroke-width="2.200"/><path d="M9 11L3 14" stroke="#2848c8" stroke-width="2.200"/><path d="M0 14.500L5 11L5.500 16Z" fill="#2848c8"/><path d="M17 18L11.500 16L15.500 12.500Z" fill="#d82828"/><circle cx="9" cy="11" r="1.500" fill="#ddd"/></svg>
<svg style="left:1238px;top:172px;" width="18" height="17" viewBox="0 0 18 17"><circle cx="9" cy="8.500" r="6.800" fill="#5e5e5e" stroke="#9c9c9c" stroke-width="2"/><path d="M9 2.500A6 6 0 0 0 9 14.500Z" fill="#8c8c8c"/><path d="M9 2.500V8.500L5 13" stroke="#b8b8b8" stroke-width="1" fill="none"/></svg>
<svg style="left:1259px;top:172px;" width="17" height="17" viewBox="0 0 17 17"><path d="M2 15L13 4" stroke="#8c8c8c" stroke-width="2.200"/><path d="M8 2.500L15 2L14.500 9Z" fill="#8c8c8c"/></svg>
<span class="t" style="left:1060.9px;top:194.5px;font-size:11px;line-height:15px;color:#d8d8d8;letter-spacing:-0.462px;">Channels</span>
<span class="t" style="left:1119.5px;top:194.5px;font-size:11px;line-height:15px;color:#d8d8d8;letter-spacing:-0.462px;">Edit</span>
<span class="t" style="left:1152.0px;top:194.5px;font-size:11px;line-height:15px;color:#d8d8d8;letter-spacing:0.042px;">Object</span>
<span class="t" style="left:1199.2px;top:194.5px;font-size:11px;line-height:15px;color:#d8d8d8;letter-spacing:-0.462px;">Show</span>
<div style="left:1053px;top:213px;width:225px;height:368px;background:#2a2a2a;border:1px solid #222;border-right-color:#5e5e5e;border-bottom-color:#5e5e5e;"></div>
<div style="left:1054px;top:214px;width:223px;height:366px;background:transparent;border:1px solid #686868;border-right-color:#222;border-bottom-color:#222;"></div>
<svg style="left:1129px;top:584px;" width="72" height="5" viewBox="0 0 72 5"><rect x="0" y="0" width="1" height="1" fill="#6e6e6e"/><rect x="2" y="2" width="1" height="1" fill="#6e6e6e"/><rect x="1" y="1" width="1" height="1" fill="#303030"/><rect x="3" y="3" width="1" height="1" fill="#303030"/><rect x="4" y="0" width="1" height="1" fill="#6e6e6e"/><rect x="6" y="2" width="1" height="1" fill="#6e6e6e"/><rect x="5" y="1" width="1" height="1" fill="#303030"/><rect x="7" y="3" width="1" height="1" fill="#303030"/><rect x="8" y="0" width="1" height="1" fill="#6e6e6e"/><rect x="10" y="2" width="1" height="1" fill="#6e6e6e"/><rect x="9" y="1" width="1" height="1" fill="#303030"/><rect x="11" y="3" width="1" height="1" fill="#303030"/><rect x="12" y="0" width="1" height="1" fill="#6e6e6e"/><rect x="14" y="2" width="1" height="1" fill="#6e6e6e"/><rect x="13" y="1" width="1" height="1" fill="#303030"/><rect x="15" y="3" width="1" height="1" fill="#303030"/><rect x="16" y="0" width="1" height="1" fill="#6e6e6e"/><rect x="18" y="2" width="1" height="1" fill="#6e6e6e"/><rect x="17" y="1" width="1" height="1" fill="#303030"/><rect x="19" y="3" width="1" height="1" fill="#303030"/><rect x="20" y="0" width="1" height="1" fill="#6e6e6e"/><rect x="22" y="2" width="1" height="1" fill="#6e6e6e"/><rect x="21" y="1" width="1" height="1" fill="#303030"/><rect x="23" y="3" width="1" height="1" fill="#303030"/><rect x="24" y="0" width="1" height="1" fill="#6e6e6e"/><rect x="26" y="2" width="1" height="1" fill="#6e6e6e"/><rect x="25" y="1" width="1" height="1" fill="#303030"/><rect x="27" y="3" width="1" height="1" fill="#303030"/><rect x="28" y="0" width="1" height="1" fill="#6e6e6e"/><rect x="30" y="2" width="1" height="1" fill="#6e6e6e"/><rect x="29" y="1" width="1" height="1" fill="#303030"/><rect x="31" y="3" width="1" height="1" fill="#303030"/><rect x="32" y="0" width="1" height="1" fill="#6e6e6e"/><rect x="34" y="2" width="1" height="1" fill="#6e6e6e"/><rect x="33" y="1" width="1" height="1" fill="#303030"/><rect x="35" y="3" width="1" height="1" fill="#303030"/><rect x="36" y="0" width="1" height="1" fill="#6e6e6e"/><rect x="38" y="2" width="1" height="1" fill="#6e6e6e"/><rect x="37" y="1" width="1" height="1" fill="#303030"/><rect x="39" y="3" width="1" height="1" fill="#303030"/><rect x="40" y="0" width="1" height="1" fill="#6e6e6e"/><rect x="42" y="2" width="1" height="1" fill="#6e6e6e"/><rect x="41" y="1" width="1" height="1" fill="#303030"/><rect x="43" y="3" width="1" height="1" fill="#303030"/><rect x="44" y="0" width="1" height="1" fill="#6e6e6e"/><rect x="46" y="2" width="1" height="1" fill="#6e6e6e"/><rect x="45" y="1" width="1" height="1" fill="#303030"/><rect x="47" y="3" width="1" height="1" fill="#303030"/><rect x="48" y="0" width="1" height="1" fill="#6e6e6e"/><rect x="50" y="2" width="1" height="1" fill="#6e6e6e"/><rect x="49" y="1" width="1" height="1" fill="#303030"/><rect x="51" y="3" width="1" height="1" fill="#303030"/><rect x="52" y="0" width="1" height="1" fill="#6e6e6e"/><rect x="54" y="2" width="1" height="1" fill="#6e6e6e"/><rect x="53" y="1" width="1" height="1" fill="#303030"/><rect x="55" y="3" width="1" height="1" fill="#303030"/><rect x="56" y="0" width="1" height="1" fill="#6e6e6e"/><rect x="58" y="2" width="1" height="1" fill="#6e6e6e"/><rect x="57" y="1" width="1" height="1" fill="#303030"/><rect x="59" y="3" width="1" height="1" fill="#303030"/><rect x="60" y="0" width="1" height="1" fill="#6e6e6e"/><rect x="62" y="2" width="1" height="1" fill="#6e6e6e"/><rect x="61" y="1" width="1" height="1" fill="#303030"/><rect x="63" y="3" width="1" height="1" fill="#303030"/><rect x="64" y="0" width="1" height="1" fill="#6e6e6e"/><rect x="66" y="2" width="1" height="1" fill="#6e6e6e"/><rect x="65" y="1" width="1" height="1" fill="#303030"/><rect x="67" y="3" width="1" height="1" fill="#303030"/><rect x="68" y="0" width="1" height="1" fill="#6e6e6e"/><rect x="70" y="2" width="1" height="1" fill="#6e6e6e"/><rect x="69" y="1" width="1" height="1" fill="#303030"/><rect x="71" y="3" width="1" height="1" fill="#303030"/></svg>
<svg style="left:1047px;top:387px;" width="4" height="228" viewBox="0 0 4 228"><rect x="1" y="0" width="1" height="1" fill="#6e6e6e"/><rect x="2" y="1" width="1" height="1" fill="#303030"/><rect x="0" y="2" width="1" height="1" fill="#6e6e6e"/><rect x="1" y="3" width="1" height="1" fill="#303030"/><rect x="1" y="4" width="1" height="1" fill="#6e6e6e"/><rect x="2" y="5" width="1" height="1" fill="#303030"/><rect x="0" y="6" width="1" height="1" fill="#6e6e6e"/><rect x="1" y="7" width="1" height="1" fill="#303030"/><rect x="1" y="8" width="1" height="1" fill="#6e6e6e"/><rect x="2" y="9" width="1" height="1" fill="#303030"/><rect x="0" y="10" width="1" height="1" fill="#6e6e6e"/><rect x="1" y="11" width="1" height="1" fill="#303030"/><rect x="1" y="12" width="1" height="1" fill="#6e6e6e"/><rect x="2" y="13" width="1" height="1" fill="#303030"/><rect x="0" y="14" width="1" height="1" fill="#6e6e6e"/><rect x="1" y="15" width="1" height="1" fill="#303030"/><rect x="1" y="16" width="1" height="1" fill="#6e6e6e"/><rect x="2" y="17" width="1" height="1" fill="#303030"/><rect x="0" y="18" width="1" height="1" fill="#6e6e6e"/><rect x="1" y="19" width="1" height="1" fill="#303030"/><rect x="1" y="20" width="1" height="1" fill="#6e6e6e"/><rect x="2" y="21" width="1" height="1" fill="#303030"/><rect x="0" y="22" width="1" height="1" fill="#6e6e6e"/><rect x="1" y="23" width="1" height="1" fill="#303030"/><rect x="1" y="24" width="1" height="1" fill="#6e6e6e"/><rect x="2" y="25" width="1" height="1" fill="#303030"/><rect x="0" y="26" width="1" height="1" fill="#6e6e6e"/><rect x="1" y="27" width="1" height="1" fill="#303030"/><rect x="1" y="28" width="1" height="1" fill="#6e6e6e"/><rect x="2" y="29" width="1" height="1" fill="#303030"/><rect x="0" y="30" width="1" height="1" fill="#6e6e6e"/><rect x="1" y="31" width="1" height="1" fill="#303030"/><rect x="1" y="32" width="1" height="1" fill="#6e6e6e"/><rect x="2" y="33" width="1" height="1" fill="#303030"/><rect x="0" y="34" width="1" height="1" fill="#6e6e6e"/><rect x="1" y="35" width="1" height="1" fill="#303030"/><rect x="1" y="36" width="1" height="1" fill="#6e6e6e"/><rect x="2" y="37" width="1" height="1" fill="#303030"/><rect x="0" y="38" width="1" height="1" fill="#6e6e6e"/><rect x="1" y="39" width="1" height="1" fill="#303030"/><rect x="1" y="40" width="1" height="1" fill="#6e6e6e"/><rect x="2" y="41" width="1" height="1" fill="#303030"/><rect x="0" y="42" width="1" height="1" fill="#6e6e6e"/><rect x="1" y="43" width="1" height="1" fill="#303030"/><rect x="1" y="44" width="1" height="1" fill="#6e6e6e"/><rect x="2" y="45" width="1" height="1" fill="#303030"/><rect x="0" y="46" width="1" height="1" fill="#6e6e6e"/><rect x="1" y="47" width="1" height="1" fill="#303030"/><rect x="1" y="48" width="1" height="1" fill="#6e6e6e"/><rect x="2" y="49" width="1" height="1" fill="#303030"/><rect x="0" y="50" width="1" height="1" fill="#6e6e6e"/><rect x="1" y="51" width="1" height="1" fill="#303030"/><rect x="1" y="52" width="1" height="1" fill="#6e6e6e"/><rect x="2" y="53" width="1" height="1" fill="#303030"/><rect x="0" y="54" width="1" height="1" fill="#6e6e6e"/><rect x="1" y="55" width="1" height="1" fill="#303030"/><rect x="1" y="56" width="1" height="1" fill="#6e6e6e"/><rect x="2" y="57" width="1" height="1" fill="#303030"/><rect x="0" y="58" width="1" height="1" fill="#6e6e6e"/><rect x="1" y="59" width="1" height="1" fill="#303030"/><rect x="1" y="60" width="1" height="1" fill="#6e6e6e"/><rect x="2" y="61" width="1" height="1" fill="#303030"/><rect x="0" y="62" width="1" height="1" fill="#6e6e6e"/><rect x="1" y="63" width="1" height="1" fill="#303030"/><rect x="1" y="64" width="1" height="1" fill="#6e6e6e"/><rect x="2" y="65" width="1" height="1" fill="#303030"/><rect x="0" y="66" width="1" height="1" fill="#6e6e6e"/><rect x="1" y="67" width="1" height="1" fill="#303030"/><rect x="1" y="68" width="1" height="1" fill="#6e6e6e"/><rect x="2" y="69" width="1" height="1" fill="#303030"/><rect x="0" y="70" width="1" height="1" fill="#6e6e6e"/><rect x="1" y="71" width="1" height="1" fill="#303030"/><rect x="1" y="72" width="1" height="1" fill="#6e6e6e"/><rect x="2" y="73" width="1" height="1" fill="#303030"/><rect x="0" y="74" width="1" height="1" fill="#6e6e6e"/><rect x="1" y="75" width="1" height="1" fill="#303030"/><rect x="1" y="76" width="1" height="1" fill="#6e6e6e"/><rect x="2" y="77" width="1" height="1" fill="#303030"/><rect x="0" y="78" width="1" height="1" fill="#6e6e6e"/><rect x="1" y="79" width="1" height="1" fill="#303030"/><rect x="1" y="80" width="1" height="1" fill="#6e6e6e"/><rect x="2" y="81" width="1" height="1" fill="#303030"/><rect x="0" y="82" width="1" height="1" fill="#6e6e6e"/><rect x="1" y="83" width="1" height="1" fill="#303030"/><rect x="1" y="84" width="1" height="1" fill="#6e6e6e"/><rect x="2" y="85" width="1" height="1" fill="#303030"/><rect x="0" y="86" width="1" height="1" fill="#6e6e6e"/><rect x="1" y="87" width="1" height="1" fill="#303030"/><rect x="1" y="88" width="1" height="1" fill="#6e6e6e"/><rect x="2" y="89" width="1" height="1" fill="#303030"/><rect x="0" y="90" width="1" height="1" fill="#6e6e6e"/><rect x="1" y="91" width="1" height="1" fill="#303030"/><rect x="1" y="92" width="1" height="1" fill="#6e6e6e"/><rect x="2" y="93" width="1" height="1" fill="#303030"/><rect x="0" y="94" width="1" height="1" fill="#6e6e6e"/><rect x="1" y="95" width="1" height="1" fill="#303030"/><rect x="1" y="96" width="1" height="1" fill="#6e6e6e"/><rect x="2" y="97" width="1" height="1" fill="#303030"/><rect x="0" y="98" width="1" height="1" fill="#6e6e6e"/><rect x="1" y="99" width="1" height="1" fill="#303030"/><rect x="1" y="100" width="1" height="1" fill="#6e6e6e"/><rect x="2" y="101" width="1" height="1" fill="#303030"/><rect x="0" y="102" width="1" height="1" fill="#6e6e6e"/><rect x="1" y="103" width="1" height="1" fill="#303030"/><rect x="1" y="104" width="1" height="1" fill="#6e6e6e"/><rect x="2" y="105" width="1" height="1" fill="#303030"/><rect x="0" y="106" width="1" height="1" fill="#6e6e6e"/><rect x="1" y="107" width="1" height="1" fill="#303030"/><rect x="1" y="108" width="1" height="1" fill="#6e6e6e"/><rect x="2" y="109" width="1" height="1" fill="#303030"/><rect x="0" y="110" width="1" height="1" fill="#6e6e6e"/><rect x="1" y="111" width="1" height="1" fill="#303030"/><rect x="1" y="112" width="1" height="1" fill="#6e6e6e"/><rect x="2" y="113" width="1" height="1" fill="#303030"/><rect x="0" y="114" width="1" height="1" fill="#6e6e6e"/><rect x="1" y="115" width="1" height="1" fill="#303030"/><rect x="1" y="116" width="1" height="1" fill="#6e6e6e"/><rect x="2" y="117" width="1" height="1" fill="#303030"/><rect x="0" y="118" width="1" height="1" fill="#6e6e6e"/><rect x="1" y="119" width="1" height="1" fill="#303030"/><rect x="1" y="120" width="1" height="1" fill="#6e6e6e"/><rect x="2" y="121" width="1" height="1" fill="#303030"/><rect x="0" y="122" width="1" height="1" fill="#6e6e6e"/><rect x="1" y="123" width="1" height="1" fill="#303030"/><rect x="1" y="124" width="1" height="1" fill="#6e6e6e"/><rect x="2" y="125" width="1" height="1" fill="#303030"/><rect x="0" y="126" width="1" height="1" fill="#6e6e6e"/><rect x="1" y="127" width="1" height="1" fill="#303030"/><rect x="1" y="128" width="1" height="1" fill="#6e6e6e"/><rect x="2" y="129" width="1" height="1" fill="#303030"/><rect x="0" y="130" width="1" height="1" fill="#6e6e6e"/><rect x="1" y="131" width="1" height="1" fill="#303030"/><rect x="1" y="132" width="1" height="1" fill="#6e6e6e"/><rect x="2" y="133" width="1" height="1" fill="#303030"/><rect x="0" y="134" width="1" height="1" fill="#6e6e6e"/><rect x="1" y="135" width="1" height="1" fill="#303030"/><rect x="1" y="136" width="1" height="1" fill="#6e6e6e"/><rect x="2" y="137" width="1" height="1" fill="#303030"/><rect x="0" y="138" width="1" height="1" fill="#6e6e6e"/><rect x="1" y="139" width="1" height="1" fill="#303030"/><rect x="1" y="140" width="1" height="1" fill="#6e6e6e"/><rect x="2" y="141" width="1" height="1" fill="#303030"/><rect x="0" y="142" width="1" height="1" fill="#6e6e6e"/><rect x="1" y="143" width="1" height="1" fill="#303030"/><rect x="1" y="144" width="1" height="1" fill="#6e6e6e"/><rect x="2" y="145" width="1" height="1" fill="#303030"/><rect x="0" y="146" width="1" height="1" fill="#6e6e6e"/><rect x="1" y="147" width="1" height="1" fill="#303030"/><rect x="1" y="148" width="1" height="1" fill="#6e6e6e"/><rect x="2" y="149" width="1" height="1" fill="#303030"/><rect x="0" y="150" width="1" height="1" fill="#6e6e6e"/><rect x="1" y="151" width="1" height="1" fill="#303030"/><rect x="1" y="152" width="1" height="1" fill="#6e6e6e"/><rect x="2" y="153" width="1" height="1" fill="#303030"/><rect x="0" y="154" width="1" height="1" fill="#6e6e6e"/><rect x="1" y="155" width="1" height="1" fill="#303030"/><rect x="1" y="156" width="1" height="1" fill="#6e6e6e"/><rect x="2" y="157" width="1" height="1" fill="#303030"/><rect x="0" y="158" width="1" height="1" fill="#6e6e6e"/><rect x="1" y="159" width="1" height="1" fill="#303030"/><rect x="1" y="160" width="1" height="1" fill="#6e6e6e"/><rect x="2" y="161" width="1" height="1" fill="#303030"/><rect x="0" y="162" width="1" height="1" fill="#6e6e6e"/><rect x="1" y="163" width="1" height="1" fill="#303030"/><rect x="1" y="164" width="1" height="1" fill="#6e6e6e"/><rect x="2" y="165" width="1" height="1" fill="#303030"/><rect x="0" y="166" width="1" height="1" fill="#6e6e6e"/><rect x="1" y="167" width="1" height="1" fill="#303030"/><rect x="1" y="168" width="1" height="1" fill="#6e6e6e"/><rect x="2" y="169" width="1" height="1" fill="#303030"/><rect x="0" y="170" width="1" height="1" fill="#6e6e6e"/><rect x="1" y="171" width="1" height="1" fill="#303030"/><rect x="1" y="172" width="1" height="1" fill="#6e6e6e"/><rect x="2" y="173" width="1" height="1" fill="#303030"/><rect x="0" y="174" width="1" height="1" fill="#6e6e6e"/><rect x="1" y="175" width="1" height="1" fill="#303030"/><rect x="1" y="176" width="1" height="1" fill="#6e6e6e"/><rect x="2" y="177" width="1" height="1" fill="#303030"/><rect x="0" y="178" width="1" height="1" fill="#6e6e6e"/><rect x="1" y="179" width="1" height="1" fill="#303030"/><rect x="1" y="180" width="1" height="1" fill="#6e6e6e"/><rect x="2" y="181" width="1" height="1" fill="#303030"/><rect x="0" y="182" width="1" height="1" fill="#6e6e6e"/><rect x="1" y="183" width="1" height="1" fill="#303030"/><rect x="1" y="184" width="1" height="1" fill="#6e6e6e"/><rect x="2" y="185" width="1" height="1" fill="#303030"/><rect x="0" y="186" width="1" height="1" fill="#6e6e6e"/><rect x="1" y="187" width="1" height="1" fill="#303030"/><rect x="1" y="188" width="1" height="1" fill="#6e6e6e"/><rect x="2" y="189" width="1" height="1" fill="#303030"/><rect x="0" y="190" width="1" height="1" fill="#6e6e6e"/><rect x="1" y="191" width="1" height="1" fill="#303030"/><rect x="1" y="192" width="1" height="1" fill="#6e6e6e"/><rect x="2" y="193" width="1" height="1" fill="#303030"/><rect x="0" y="194" width="1" height="1" fill="#6e6e6e"/><rect x="1" y="195" width="1" height="1" fill="#303030"/><rect x="1" y="196" width="1" height="1" fill="#6e6e6e"/><rect x="2" y="197" width="1" height="1" fill="#303030"/><rect x="0" y="198" width="1" height="1" fill="#6e6e6e"/><rect x="1" y="199" width="1" height="1" fill="#303030"/><rect x="1" y="200" width="1" height="1" fill="#6e6e6e"/><rect x="2" y="201" width="1" height="1" fill="#303030"/><rect x="0" y="202" width="1" height="1" fill="#6e6e6e"/><rect x="1" y="203" width="1" height="1" fill="#303030"/><rect x="1" y="204" width="1" height="1" fill="#6e6e6e"/><rect x="2" y="205" width="1" height="1" fill="#303030"/><rect x="0" y="206" width="1" height="1" fill="#6e6e6e"/><rect x="1" y="207" width="1" height="1" fill="#303030"/><rect x="1" y="208" width="1" height="1" fill="#6e6e6e"/><rect x="2" y="209" width="1" height="1" fill="#303030"/><rect x="0" y="210" width="1" height="1" fill="#6e6e6e"/><rect x="1" y="211" width="1" height="1" fill="#303030"/><rect x="1" y="212" width="1" height="1" fill="#6e6e6e"/><rect x="2" y="213" width="1" height="1" fill="#303030"/><rect x="0" y="214" width="1" height="1" fill="#6e6e6e"/><rect x="1" y="215" width="1" height="1" fill="#303030"/><rect x="1" y="216" width="1" height="1" fill="#6e6e6e"/><rect x="2" y="217" width="1" height="1" fill="#303030"/><rect x="0" y="218" width="1" height="1" fill="#6e6e6e"/><rect x="1" y="219" width="1" height="1" fill="#303030"/><rect x="1" y="220" width="1" height="1" fill="#6e6e6e"/><rect x="2" y="221" width="1" height="1" fill="#303030"/><rect x="0" y="222" width="1" height="1" fill="#6e6e6e"/><rect x="1" y="223" width="1" height="1" fill="#303030"/><rect x="1" y="224" width="1" height="1" fill="#6e6e6e"/><rect x="2" y="225" width="1" height="1" fill="#303030"/><rect x="0" y="226" width="1" height="1" fill="#6e6e6e"/><rect x="1" y="227" width="1" height="1" fill="#303030"/></svg>
<div style="left:1054px;top:613px;width:223px;height:252px;background:#444444;border:1px solid #5e5e5e;border-bottom-color:#666;"></div>
<div style="left:1112px;top:596px;width:63px;height:18px;background:linear-gradient(180deg,#4a4a4a,#404040);border:1px solid #2c2c2c;box-shadow:inset 0 1px 0 #5a5a5a;"></div>
<div style="left:1174px;top:596px;width:48px;height:18px;background:linear-gradient(180deg,#4a4a4a,#404040);border:1px solid #2c2c2c;box-shadow:inset 0 1px 0 #5a5a5a;"></div>
<div style="left:1054px;top:593px;width:59px;height:21px;background:linear-gradient(180deg,#6c6c6c,#5e5e5e);border:1px solid #2c2c2c;border-bottom:none;border-radius:3px 3px 0 0;box-shadow:inset 0 1px 0 #888;"></div>
<span class="t" style="left:1065.5px;top:596.0px;font-size:11px;line-height:15px;color:#f0f0f0;letter-spacing:-0.344px;">Display</span>
<span class="t" style="left:1125.5px;top:597.0px;font-size:11px;line-height:15px;color:#d8d8d8;letter-spacing:-0.215px;">Render</span>
<span class="t" style="left:1186.4px;top:597.0px;font-size:11px;line-height:15px;color:#d8d8d8;letter-spacing:-0.462px;">Anim</span>
<span class="t" style="left:1063.5px;top:617.0px;font-size:11px;line-height:15px;color:#d8d8d8;letter-spacing:-0.203px;">Layers</span>
<span class="t" style="left:1111.0px;top:617.0px;font-size:11px;line-height:15px;color:#d8d8d8;letter-spacing:-0.318px;">Options</span>
<span class="t" style="left:1162.1px;top:617.0px;font-size:11px;line-height:15px;color:#d8d8d8;letter-spacing:-0.462px;">Help</span>
<svg style="left:1176px;top:639px;" width="22" height="17" viewBox="0 0 22 17"><path d="M3 15.500V4" stroke="#c82838" stroke-width="2.200" fill="none"/><path d="M.3 6L3 .5L5.700 6Z" fill="#c82838"/><path d="M6.500 12L14.500 9L20 12L11.500 15.5Z" fill="#f8f8f8" stroke="#2e2e2e" stroke-width=".7"/><path d="M6.500 9L14.500 6L20 9L11.500 12.5Z" fill="#e0e0e0" stroke="#2e2e2e" stroke-width=".7"/><path d="M6.500 6L14.500 3L20 6L11.500 9.5Z" fill="#8a8a8a" stroke="#2e2e2e" stroke-width=".7"/></svg>
<svg style="left:1201px;top:639px;" width="22" height="17" viewBox="0 0 22 17"><path d="M3 1V12" stroke="#c82838" stroke-width="2.200" fill="none"/><path d="M.3 10.500L3 16L5.700 10.500Z" fill="#c82838"/><path d="M6.500 12L14.500 9L20 12L11.500 15.5Z" fill="#8a8a8a" stroke="#2e2e2e" stroke-width=".7"/><path d="M6.500 9L14.500 6L20 9L11.500 12.5Z" fill="#e0e0e0" stroke="#2e2e2e" stroke-width=".7"/><path d="M6.500 6L14.500 3L20 6L11.500 9.5Z" fill="#f8f8f8" stroke="#2e2e2e" stroke-width=".7"/></svg>
<svg style="left:1227px;top:636px;" width="20" height="20" viewBox="0 0 20 20"><path d="M1 14L10 9.500L18 13L8.500 19Z" fill="#f0f0f0" stroke="#777" stroke-width=".6"/><g transform="translate(14,7)"><circle r="4.500" fill="#f8a030" opacity=".35"/><path d="M0 -5.500L1.200 -1.200L5.500 0L1.200 1.200L0 5.500L-1.200 1.200L-5.500 0L-1.200 -1.200Z" fill="#f8a030"/><circle r="2" fill="#fff4c8"/></g></svg>
<svg style="left:1252px;top:636px;" width="20" height="20" viewBox="0 0 20 20"><path d="M1 15L10 10.500L18 14L8.500 19.500Z" fill="#dce8f4" stroke="#777" stroke-width=".6"/><circle cx="7.500" cy="12" r="3.800" fill="url(#bs)"/><g transform="translate(14.500,7)"><circle r="4.500" fill="#f8a030" opacity=".35"/><path d="M0 -5.500L1.200 -1.200L5.500 0L1.200 1.200L0 5.500L-1.200 1.200L-5.500 0L-1.200 -1.200Z" fill="#f8a030"/><circle r="2" fill="#fff4c8"/></g></svg>
<div style="left:1057px;top:661px;width:217px;height:202px;background:#2b2b2b;border:1px solid #383838;"></div>
<div style="left:1060px;top:845px;width:14px;height:15px;background:#6a6a6a;border:1px solid #333;border-radius:2px;"></div>
<div style="left:1076px;top:845px;width:96px;height:15px;background:linear-gradient(180deg,#727272,#626262);border:1px solid #333;border-radius:2px;"></div>
<div style="left:1172px;top:845px;width:68px;height:15px;background:#3a3a3a;background-image:repeating-conic-gradient(#2e2e2e 0% 25%, #474747 0% 50%);background-size:2px 2px;"></div>
<div style="left:1240px;top:845px;width:14px;height:15px;background:#6a6a6a;border:1px solid #333;border-radius:2px;"></div>
<div style="left:1255.5px;top:845px;width:14px;height:15px;background:#6a6a6a;border:1px solid #333;border-radius:2px;"></div>
<svg style="left:1063px;top:849px;" width="8" height="8" viewBox="0 0 8 8"><path d="M6 .5V7.500L1.500 4Z" fill="#e0e0e0"/></svg>
<svg style="left:1243px;top:849px;" width="8" height="8" viewBox="0 0 8 8"><path d="M6 .5V7.500L1.500 4Z" fill="#e0e0e0"/></svg>
<svg style="left:1259px;top:849px;" width="8" height="8" viewBox="0 0 8 8"><path d="M2 .5V7.500L6.500 4Z" fill="#e0e0e0"/></svg>
<svg style="left:1115px;top:848px;" width="18" height="10" viewBox="0 0 18 10"><rect x="0" y="0" width="1.500" height="1.500" fill="#3e3e3e"/><rect x="0" y="3" width="1.500" height="1.500" fill="#3e3e3e"/><rect x="0" y="6" width="1.500" height="1.500" fill="#3e3e3e"/><rect x="4" y="0" width="1.500" height="1.500" fill="#3e3e3e"/><rect x="4" y="3" width="1.500" height="1.500" fill="#3e3e3e"/><rect x="4" y="6" width="1.500" height="1.500" fill="#3e3e3e"/><rect x="8" y="0" width="1.500" height="1.500" fill="#3e3e3e"/><rect x="8" y="3" width="1.500" height="1.500" fill="#3e3e3e"/><rect x="8" y="6" width="1.500" height="1.500" fill="#3e3e3e"/><rect x="12" y="0" width="1.500" height="1.500" fill="#3e3e3e"/><rect x="12" y="3" width="1.500" height="1.500" fill="#3e3e3e"/><rect x="12" y="6" width="1.500" height="1.500" fill="#3e3e3e"/><rect x="16" y="0" width="1.500" height="1.500" fill="#3e3e3e"/><rect x="16" y="3" width="1.500" height="1.500" fill="#3e3e3e"/><rect x="16" y="6" width="1.500" height="1.500" fill="#3e3e3e"/></svg>
<div style="left:0px;top:868px;width:1280px;height:4px;background:#3c3c3c;"></div>
<svg style="left:7px;top:874px;" width="6" height="28" viewBox="0 0 6 28"><rect x="0" y="0" width="1" height="1" fill="#5e5e5e"/><rect x="1" y="1" width="1" height="1" fill="#2e2e2e"/><rect x="3" y="2" width="1" height="1" fill="#5e5e5e"/><rect x="4" y="3" width="1" height="1" fill="#2e2e2e"/><rect x="0" y="4" width="1" height="1" fill="#5e5e5e"/><rect x="1" y="5" width="1" height="1" fill="#2e2e2e"/><rect x="3" y="6" width="1" height="1" fill="#5e5e5e"/><rect x="4" y="7" width="1" height="1" fill="#2e2e2e"/><rect x="0" y="8" width="1" height="1" fill="#5e5e5e"/><rect x="1" y="9" width="1" height="1" fill="#2e2e2e"/><rect x="3" y="10" width="1" height="1" fill="#5e5e5e"/><rect x="4" y="11" width="1" height="1" fill="#2e2e2e"/><rect x="0" y="12" width="1" height="1" fill="#5e5e5e"/><rect x="1" y="13" width="1" height="1" fill="#2e2e2e"/><rect x="3" y="14" width="1" height="1" fill="#5e5e5e"/><rect x="4" y="15" width="1" height="1" fill="#2e2e2e"/><rect x="0" y="16" width="1" height="1" fill="#5e5e5e"/><rect x="1" y="17" width="1" height="1" fill="#2e2e2e"/><rect x="3" y="18" width="1" height="1" fill="#5e5e5e"/><rect x="4" y="19" width="1" height="1" fill="#2e2e2e"/><rect x="0" y="20" width="1" height="1" fill="#5e5e5e"/><rect x="1" y="21" width="1" height="1" fill="#2e2e2e"/><rect x="3" y="22" width="1" height="1" fill="#5e5e5e"/><rect x="4" y="23" width="1" height="1" fill="#2e2e2e"/><rect x="0" y="24" width="1" height="1" fill="#5e5e5e"/><rect x="1" y="25" width="1" height="1" fill="#2e2e2e"/><rect x="3" y="26" width="1" height="1" fill="#5e5e5e"/><rect x="4" y="27" width="1" height="1" fill="#2e2e2e"/></svg>
<div style="left:13px;top:872px;width:966px;height:30px;background:#757575;border-bottom:1px solid #5a5a5a;"></div>
<div style="left:13px;top:872px;width:6px;height:30px;background:#8c8c8c;"></div>
<div style="left:19.5px;top:872px;width:39px;height:30px;background:#626262;"></div>
<div style="left:58px;top:872px;width:1px;height:16px;background:#5e5e5e;"></div>
<svg style="left:0px;top:0px;" width="1280" height="1024" viewBox="0 0 1280 1024"><rect x="57.6" y="887" width="2" height="14" fill="#000"/><rect x="137.2" y="887" width="2" height="14" fill="#000"/><rect x="216.8" y="887" width="2" height="14" fill="#000"/><rect x="296.3" y="887" width="2" height="14" fill="#000"/><rect x="375.9" y="887" width="2" height="14" fill="#000"/><rect x="455.5" y="887" width="2" height="14" fill="#000"/><rect x="535.1" y="887" width="2" height="14" fill="#000"/><rect x="614.7" y="887" width="2" height="14" fill="#000"/><rect x="694.2" y="887" width="2" height="14" fill="#000"/><rect x="773.8" y="887" width="2" height="14" fill="#000"/><rect x="853.4" y="887" width="2" height="14" fill="#000"/><rect x="933.0" y="887" width="2" height="14" fill="#000"/></svg>
<span class="t" style="left:65.1px;top:870.5px;font-size:11px;line-height:15px;color:#000000;">2</span>
<span class="t" style="left:144.7px;top:870.5px;font-size:11px;line-height:15px;color:#000000;">4</span>
<span class="t" style="left:224.3px;top:870.5px;font-size:11px;line-height:15px;color:#000000;">6</span>
<span class="t" style="left:303.8px;top:870.5px;font-size:11px;line-height:15px;color:#000000;">8</span>
<span class="t" style="left:383.4px;top:870.5px;font-size:11px;line-height:15px;color:#000000;">10</span>
<span class="t" style="left:463.0px;top:870.5px;font-size:11px;line-height:15px;color:#000000;">12</span>
<span class="t" style="left:542.6px;top:870.5px;font-size:11px;line-height:15px;color:#000000;">14</span>
<span class="t" style="left:622.2px;top:870.5px;font-size:11px;line-height:15px;color:#000000;">16</span>
<span class="t" style="left:701.7px;top:870.5px;font-size:11px;line-height:15px;color:#000000;">18</span>
<span class="t" style="left:781.3px;top:870.5px;font-size:11px;line-height:15px;color:#000000;">20</span>
<span class="t" style="left:860.9px;top:870.5px;font-size:11px;line-height:15px;color:#000000;">22</span>
<span class="t" style="left:940.5px;top:870.5px;font-size:11px;line-height:15px;color:#000000;">24</span>
<span class="t" style="left:28.0px;top:884.5px;font-size:11px;line-height:15px;color:#ffffff;">1</span>
<div style="left:982px;top:877px;width:68px;height:19px;background:#2b2b2b;border:1px solid #383838;border-radius:2px;"></div>
<span class="t" style="left:986.0px;top:880.0px;font-size:11px;line-height:15px;color:#d8d8d8;letter-spacing:0.031px;">1.00</span>
<svg style="left:1059px;top:881px;" width="20" height="16" viewBox="0 0 20 16"><rect x=".5" y="1" width="3" height="13.500" fill="#c4c4c4"/><path d="M10.500 2V13L4 7.500Z" fill="#c4c4c4"/><path d="M17 2V13L10.500 7.500Z" fill="#c4c4c4"/></svg>
<svg style="left:1087px;top:881px;" width="20" height="16" viewBox="0 0 20 16"><rect x=".5" y="1" width="3.500" height="13.500" fill="#c4c4c4"/><path d="M16 1.500V13.500L5 7.500Z" fill="#c4c4c4"/></svg>
<svg style="left:1114px;top:881px;" width="20" height="16" viewBox="0 0 20 16"><rect x="1" y="0" width="3.500" height="15" fill="#e05068" stroke="#802030" stroke-width=".6"/><path d="M17 1.500V13.500L6 7.500Z" fill="#c4c4c4"/></svg>
<svg style="left:1144px;top:881px;" width="20" height="16" viewBox="0 0 20 16"><path d="M13.500 1V14L.5 7.500Z" fill="#c4c4c4"/></svg>
<svg style="left:1172px;top:881px;" width="20" height="16" viewBox="0 0 20 16"><path d="M.5 1V14L13.500 7.500Z" fill="#c4c4c4"/></svg>
<svg style="left:1199px;top:881px;" width="20" height="16" viewBox="0 0 20 16"><rect x="12.500" y="0" width="3.500" height="15" fill="#e05068" stroke="#802030" stroke-width=".6"/><path d="M.5 1.500V13.500L11.500 7.500Z" fill="#c4c4c4"/></svg>
<svg style="left:1227px;top:881px;" width="20" height="16" viewBox="0 0 20 16"><rect x="12" y="1" width="3.500" height="13.500" fill="#c4c4c4"/><path d="M.5 1.500V13.500L11.500 7.500Z" fill="#c4c4c4"/></svg>
<svg style="left:1253px;top:881px;" width="20" height="16" viewBox="0 0 20 16"><rect x="14" y="1" width="3" height="13.500" fill="#c4c4c4"/><path d="M.5 2V13L7 7.500Z" fill="#c4c4c4"/><path d="M7 2V13L13.500 7.500Z" fill="#c4c4c4"/></svg>
<div style="left:0px;top:905px;width:1280px;height:1px;background:#3a3a3a;"></div>
<svg style="left:7px;top:911px;" width="6" height="18" viewBox="0 0 6 18"><rect x="0" y="0" width="1" height="1" fill="#5e5e5e"/><rect x="1" y="1" width="1" height="1" fill="#2e2e2e"/><rect x="3" y="2" width="1" height="1" fill="#5e5e5e"/><rect x="4" y="3" width="1" height="1" fill="#2e2e2e"/><rect x="0" y="4" width="1" height="1" fill="#5e5e5e"/><rect x="1" y="5" width="1" height="1" fill="#2e2e2e"/><rect x="3" y="6" width="1" height="1" fill="#5e5e5e"/><rect x="4" y="7" width="1" height="1" fill="#2e2e2e"/><rect x="0" y="8" width="1" height="1" fill="#5e5e5e"/><rect x="1" y="9" width="1" height="1" fill="#2e2e2e"/><rect x="3" y="10" width="1" height="1" fill="#5e5e5e"/><rect x="4" y="11" width="1" height="1" fill="#2e2e2e"/><rect x="0" y="12" width="1" height="1" fill="#5e5e5e"/><rect x="1" y="13" width="1" height="1" fill="#2e2e2e"/><rect x="3" y="14" width="1" height="1" fill="#5e5e5e"/><rect x="4" y="15" width="1" height="1" fill="#2e2e2e"/><rect x="0" y="16" width="1" height="1" fill="#5e5e5e"/><rect x="1" y="17" width="1" height="1" fill="#2e2e2e"/><rect x="3" y="18" width="1" height="1" fill="#5e5e5e"/><rect x="4" y="19" width="1" height="1" fill="#2e2e2e"/></svg>
<div style="left:14px;top:911px;width:68px;height:18px;background:#2b2b2b;border:1px solid #383838;border-radius:2px;"></div>
<div style="left:86.5px;top:911px;width:68px;height:18px;background:#2b2b2b;border:1px solid #383838;border-radius:2px;"></div>
<span class="t" style="left:18.5px;top:913.0px;font-size:11px;line-height:15px;color:#d8d8d8;letter-spacing:0.031px;">1.00</span>
<span class="t" style="left:90.5px;top:913.0px;font-size:11px;line-height:15px;color:#d8d8d8;letter-spacing:0.031px;">1.00</span>
<div style="left:157px;top:910px;width:686px;height:21px;background:#2b2b2b;border:1px solid #383838;border-radius:2px;"></div>
<div style="left:162px;top:912.5px;width:346px;height:17.5px;background:#6c6c6c;border:1px solid #8c8c8c;border-right-color:#5a5a5a;border-bottom-color:#5a5a5a;"></div>
<svg style="left:167px;top:915px;" width="10" height="12" viewBox="0 0 10 12"><path d="M8.500 1V10.500H.5" fill="none" stroke="#2a2a2a" stroke-width="1.200"/><path d="M9.500 1V11.500H.5" fill="none" stroke="#b8b8b8" stroke-width="1"/></svg>
<svg style="left:494px;top:915px;" width="10" height="12" viewBox="0 0 10 12"><path d="M8.500 1V10.500H.5" fill="none" stroke="#2a2a2a" stroke-width="1.200"/><path d="M9.500 1V11.500H.5" fill="none" stroke="#b8b8b8" stroke-width="1"/></svg>
<span class="t" style="left:181.0px;top:914.0px;font-size:11px;line-height:15px;color:#f0f0f0;">1</span>
<span class="t" style="left:476.0px;top:914.0px;font-size:11px;line-height:15px;color:#f0f0f0;letter-spacing:-0.234px;">24</span>
<div style="left:847.5px;top:911px;width:68px;height:18px;background:#2b2b2b;border:1px solid #383838;border-radius:2px;"></div>
<div style="left:919px;top:911px;width:68px;height:18px;background:#2b2b2b;border:1px solid #383838;border-radius:2px;"></div>
<span class="t" style="left:851.0px;top:913.0px;font-size:11px;line-height:15px;color:#d8d8d8;letter-spacing:0.119px;">24.00</span>
<span class="t" style="left:923.0px;top:913.0px;font-size:11px;line-height:15px;color:#d8d8d8;letter-spacing:0.119px;">48.00</span>
<svg style="left:992px;top:916px;" width="11" height="7" viewBox="0 0 11 7"><path d="M1 .8H10L5.500 6Z" fill="#5a5a5a" stroke="#9a9a9a" stroke-width=".8"/></svg>
<svg style="left:1115px;top:916px;" width="11" height="7" viewBox="0 0 11 7"><path d="M1 .8H10L5.500 6Z" fill="#5a5a5a" stroke="#9a9a9a" stroke-width=".8"/></svg>
<div style="left:1010px;top:911px;width:100px;height:18px;background:#2b2b2b;border:1px solid #383838;border-radius:2px;"></div>
<div style="left:1133px;top:911px;width:100px;height:18px;background:#2b2b2b;border:1px solid #383838;border-radius:2px;"></div>
<span class="t" style="left:1014.0px;top:913.0px;font-size:11px;line-height:15px;color:#d8d8d8;letter-spacing:-0.345px;">No Anim Layer</span>
<span class="t" style="left:1137.0px;top:913.0px;font-size:11px;line-height:15px;color:#d8d8d8;letter-spacing:-0.199px;">No Character Set</span>
<svg style="left:1238px;top:915px;" width="17" height="9" viewBox="0 0 17 9"><circle cx="3.500" cy="4.500" r="2.800" fill="none" stroke="#c8c8c8" stroke-width="1.300"/><path d="M6.500 4.500H16M13 4.500V8M15.500 4.500V7" stroke="#c8c8c8" stroke-width="1.300" fill="none"/></svg>
<svg style="left:1260px;top:912px;" width="15" height="15" viewBox="0 0 15 15"><rect x=".5" y=".5" width="14" height="14" fill="#f4f4f4" stroke="#8aa6c6"/><rect x="1" y="1" width="13" height="3" fill="#5a9ad6"/><path d="M3 7H12M3 10H12M5 13L10 5M4 6Q8 14 12 11" stroke="#d83030" stroke-width="1.100" fill="none"/></svg>
<div style="left:0px;top:935px;width:1280px;height:1px;background:#3a3a3a;"></div>
<svg style="left:7px;top:941px;" width="6" height="18" viewBox="0 0 6 18"><rect x="0" y="0" width="1" height="1" fill="#5e5e5e"/><rect x="1" y="1" width="1" height="1" fill="#2e2e2e"/><rect x="3" y="2" width="1" height="1" fill="#5e5e5e"/><rect x="4" y="3" width="1" height="1" fill="#2e2e2e"/><rect x="0" y="4" width="1" height="1" fill="#5e5e5e"/><rect x="1" y="5" width="1" height="1" fill="#2e2e2e"/><rect x="3" y="6" width="1" height="1" fill="#5e5e5e"/><rect x="4" y="7" width="1" height="1" fill="#2e2e2e"/><rect x="0" y="8" width="1" height="1" fill="#5e5e5e"/><rect x="1" y="9" width="1" height="1" fill="#2e2e2e"/><rect x="3" y="10" width="1" height="1" fill="#5e5e5e"/><rect x="4" y="11" width="1" height="1" fill="#2e2e2e"/><rect x="0" y="12" width="1" height="1" fill="#5e5e5e"/><rect x="1" y="13" width="1" height="1" fill="#2e2e2e"/><rect x="3" y="14" width="1" height="1" fill="#5e5e5e"/><rect x="4" y="15" width="1" height="1" fill="#2e2e2e"/><rect x="0" y="16" width="1" height="1" fill="#5e5e5e"/><rect x="1" y="17" width="1" height="1" fill="#2e2e2e"/><rect x="3" y="18" width="1" height="1" fill="#5e5e5e"/><rect x="4" y="19" width="1" height="1" fill="#2e2e2e"/></svg>
<span class="t" style="left:22.9px;top:943.0px;font-size:11px;line-height:15px;color:#d8d8d8;letter-spacing:-0.462px;">MEL</span>
<div style="left:59px;top:939px;width:597px;height:23px;background:#2c2c2c;border:1px solid #2a2a2a;border-radius:2px;"></div>
<div style="left:662px;top:939px;width:596px;height:23px;background:#000000;border:1px solid #303030;border-radius:2px;"></div>
<svg style="left:1260px;top:943px;" width="15" height="14" viewBox="0 0 15 14"><rect x=".75" y=".75" width="13" height="12.500" fill="#3a3a3a" stroke="#ececec" stroke-width="1.300"/><rect x="1.500" y="1.500" width="11.500" height="2" fill="#7a9ac0"/><rect x="3" y="4.500" width="8.500" height="3" fill="#8c8c8c"/><rect x="3" y="8.500" width="8.500" height="3" fill="#d0d0d0"/></svg>
<div style="left:0px;top:965px;width:1280px;height:1px;background:#3a3a3a;"></div>
<svg style="left:7px;top:971px;" width="6" height="18" viewBox="0 0 6 18"><rect x="0" y="0" width="1" height="1" fill="#5e5e5e"/><rect x="1" y="1" width="1" height="1" fill="#2e2e2e"/><rect x="3" y="2" width="1" height="1" fill="#5e5e5e"/><rect x="4" y="3" width="1" height="1" fill="#2e2e2e"/><rect x="0" y="4" width="1" height="1" fill="#5e5e5e"/><rect x="1" y="5" width="1" height="1" fill="#2e2e2e"/><rect x="3" y="6" width="1" height="1" fill="#5e5e5e"/><rect x="4" y="7" width="1" height="1" fill="#2e2e2e"/><rect x="0" y="8" width="1" height="1" fill="#5e5e5e"/><rect x="1" y="9" width="1" height="1" fill="#2e2e2e"/><rect x="3" y="10" width="1" height="1" fill="#5e5e5e"/><rect x="4" y="11" width="1" height="1" fill="#2e2e2e"/><rect x="0" y="12" width="1" height="1" fill="#5e5e5e"/><rect x="1" y="13" width="1" height="1" fill="#2e2e2e"/><rect x="3" y="14" width="1" height="1" fill="#5e5e5e"/><rect x="4" y="15" width="1" height="1" fill="#2e2e2e"/><rect x="0" y="16" width="1" height="1" fill="#5e5e5e"/><rect x="1" y="17" width="1" height="1" fill="#2e2e2e"/><rect x="3" y="18" width="1" height="1" fill="#5e5e5e"/><rect x="4" y="19" width="1" height="1" fill="#2e2e2e"/></svg>
<div style="left:13px;top:969px;width:1264px;height:21px;background:#444444;border:1px solid #5a5a5a;border-top-color:#333;border-left-color:#333;border-radius:2px;"></div>
<span class="t" style="left:25.5px;top:973.0px;font-size:11px;line-height:15px;color:#d8d8d8;letter-spacing:-0.434px;">Select Tool: select an object</span>
<svg style="left:1263px;top:977px;" width="13" height="13" viewBox="0 0 13 13"><path d="M13 1L1 13M13 5L5 13M13 9L9 13" stroke="#2a2a2a" stroke-width="1.500"/><path d="M13 2.500L2.500 13M13 6.500L6.500 13" stroke="#666" stroke-width=".8"/></svg>
<div style="left:0px;top:991px;width:1280px;height:3px;background:#3c3c3c;"></div>
<div style="left:0px;top:994px;width:1280px;height:30px;background:#000000;"></div>
<div style="left:0px;top:994px;width:156px;height:30px;background:linear-gradient(180deg,#30343a 0%,#8c8c8c 4%,#8c8c8c 6%,#1c2026 9%,#14171c 100%);"></div>
<div style="left:1211px;top:994px;width:69px;height:30px;background:linear-gradient(180deg,#30343a 0%,#a0a0a0 4%,#a0a0a0 6%,#1e232a 9%,#14181e 100%);"></div>
<svg style="left:13px;top:994px;" width="36" height="30" viewBox="0 0 36 30"><defs><radialGradient id="orb" cx=".5" cy=".3" r=".75"><stop offset="0" stop-color="#bfe4fa"/><stop offset=".45" stop-color="#3a8ad0"/><stop offset="1" stop-color="#0c2a58"/></radialGradient></defs><circle cx="18" cy="18" r="15.500" fill="url(#orb)" stroke="#9cc8e8" stroke-width=".8"/><path d="M10 12Q13 10 17 11.500L16 17.500Q13 16 9 18Z" fill="#e85030"/><path d="M18.500 12Q22 13.500 26 11.500L25 17.500Q21 19.500 17.500 18Z" fill="#7cc030"/><path d="M8.500 19.500Q12 17.500 15.500 19L14.500 25Q11 23.500 7.500 25.500Z" fill="#3a90e0"/><path d="M17 19.500Q20.500 21 24.500 19L23.500 25Q20 27 16 25.500Z" fill="#f8c020"/><ellipse cx="18" cy="9" rx="11" ry="6" fill="#fff" opacity=".25"/></svg>
<svg style="left:71px;top:1003px;" width="17" height="15" viewBox="0 0 17 15"><rect x=".5" y=".5" width="16" height="12.500" rx="1.500" fill="#1a5ac8" stroke="#b8c8e0" stroke-width="1"/><rect x="3" y="3" width="11" height="7.500" fill="#2a7ae8"/></svg>
<svg style="left:93px;top:1000px;" width="19" height="19" viewBox="0 0 19 19"><text x="9.500" y="17" font-family="Liberation Sans" font-weight="bold" font-style="italic" font-size="25" text-anchor="middle" fill="#2a90e8">e</text><ellipse cx="9.500" cy="9.500" rx="9.500" ry="3.500" fill="none" stroke="#f0b820" stroke-width="1.600" transform="rotate(-30 9.500 9.500)"/></svg>
<svg style="left:117px;top:1000px;" width="17" height="17" viewBox="0 0 17 17"><rect width="17" height="17" fill="#f8f8f8"/><path d="M1 1H8L4 8L1 5Z" fill="#c03030"/><path d="M9 1H16V9H11Z" fill="#f8b020"/><path d="M1 5L5 9L1 16Z" fill="#3a50c0"/><path d="M5 12H16V16H5Z" fill="#30a030"/><path d="M8 1L4 8L10 9Z" fill="#8a40a0"/></svg>
<svg style="left:144px;top:1001px;" width="10" height="8" viewBox="0 0 10 8"><path d="M1 1L4 4L1 7M5.500 1L8.500 4L5.500 7" fill="none" stroke="#fff" stroke-width="1.600"/></svg>
<svg style="left:1212px;top:1002px;" width="15" height="15" viewBox="0 0 15 15"><rect x="5" y=".5" width="9" height="7" fill="#3a9af0" stroke="#e8f0f8" stroke-width="1"/><rect x=".5" y="4.500" width="9" height="7" fill="#3a9af0" stroke="#e8f0f8" stroke-width="1"/><rect x="3.500" y="11.500" width="3" height="1.500" fill="#e8f0f8"/><rect x="1.500" y="13" width="7" height="1.200" fill="#e8f0f8"/></svg>
<span class="t" style="left:1235.7px;top:1001.0px;font-size:12px;line-height:16px;color:#ffffff;letter-spacing:-0.504px;">18:21</span>
</div></body></html>
